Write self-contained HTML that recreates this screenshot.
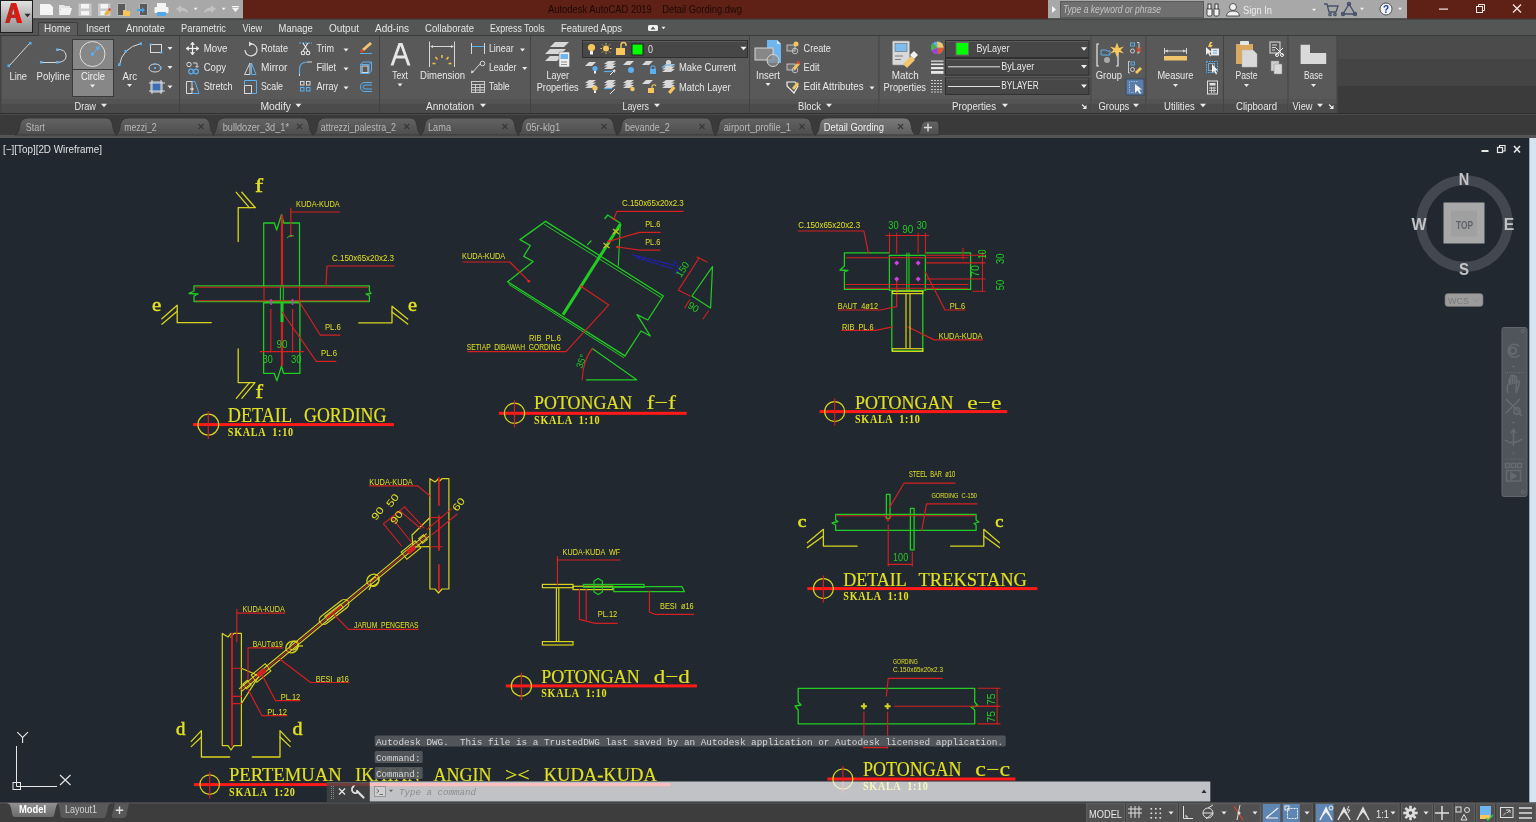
<!DOCTYPE html><html><head><meta charset="utf-8"><style>
*{margin:0;padding:0}html,body{width:1536px;height:822px;overflow:hidden;background:#212830;font-family:"Liberation Sans",sans-serif}
svg{position:absolute;left:0;top:0}
text{white-space:pre}.S{font-family:"Liberation Sans",sans-serif}.R{font-family:"Liberation Serif",serif}.M{font-family:"Liberation Mono",monospace}
</style></head><body>
<svg width="1536" height="822" viewBox="0 0 1536 822">
<rect x="193" y="423.1" width="201" height="3" fill="#ff1a1a"/>
<circle cx="208.3" cy="424.6" r="10.4" fill="none" stroke="#d8d41e" stroke-width="1.2"/>
<line x1="208.3" y1="411.20000000000005" x2="208.3" y2="439.0" stroke="#d42020" stroke-width="1.2"/>
<text class="R" x="227.8" y="421.8" font-size="21.1" fill="#e2e022" stroke="#e2e022" stroke-width="0.15" textLength="64.2" lengthAdjust="spacingAndGlyphs">DETAIL</text>
<text class="R" x="304" y="421.8" font-size="21.1" fill="#e2e022" stroke="#e2e022" stroke-width="0.15" textLength="82.4" lengthAdjust="spacingAndGlyphs">GORDING</text>
<text class="R" x="0" y="0" font-size="12.7" font-weight="bold" fill="#e2e022" textLength="81.5" lengthAdjust="spacing" transform="translate(227.8,436.3) scale(0.8,1)">SKALA  1:10</text>
<g fill="none" stroke="#d8d41e" stroke-width="1.3" stroke-linejoin="round" stroke-linecap="round">
<path d="M238.2,241.5 L238.2,207.7 L255.4,207.7 L241.8,192.3" stroke="#d8d41e" stroke-width="1.3" fill="none"/>
<line x1="249.3" y1="207.7" x2="236.3" y2="192.3" stroke="#d8d41e" stroke-width="1.3"/>
<path d="M238.2,349 L238.2,382.6 L255,382.6 L241.8,398.3" stroke="#d8d41e" stroke-width="1.3" fill="none"/>
<line x1="249.5" y1="382.6" x2="236.3" y2="398.3" stroke="#d8d41e" stroke-width="1.3"/>
<path d="M211.2,322.7 L177.2,322.7 L177.2,305.2 L161.9,318.7" stroke="#d8d41e" stroke-width="1.3" fill="none"/>
<line x1="177.2" y1="311.2" x2="161.9" y2="324.2" stroke="#d8d41e" stroke-width="1.3"/>
<path d="M358.7,322.8 L392,322.8 L392,306.2 L407.7,319" stroke="#d8d41e" stroke-width="1.3" fill="none"/>
<line x1="392" y1="312" x2="407.7" y2="324" stroke="#d8d41e" stroke-width="1.3"/>
</g>
<text class="R" x="255" y="192" font-size="19" fill="#e2e022" textLength="8.0" lengthAdjust="spacingAndGlyphs" stroke="#e2e022" stroke-width="0.5">f</text>
<text class="R" x="255.4" y="398.4" font-size="19" fill="#e2e022" textLength="7.5" lengthAdjust="spacingAndGlyphs" stroke="#e2e022" stroke-width="0.5">f</text>
<text class="R" x="152" y="311" font-size="19" fill="#e2e022" textLength="9.2" lengthAdjust="spacingAndGlyphs" stroke="#e2e022" stroke-width="0.5">e</text>
<text class="R" x="408" y="311" font-size="19" fill="#e2e022" textLength="9.0" lengthAdjust="spacingAndGlyphs" stroke="#e2e022" stroke-width="0.5">e</text>
<g fill="none" stroke="#22cc22" stroke-width="1.3" stroke-linejoin="round" stroke-linecap="round">
<path d="M263.7,285.9 L263.7,223 L274.4,223 L276.7,230 L281.5,214.7 L283.7,223 L299.5,223 L299.5,285.9" stroke="#22cc22" stroke-width="1.3" fill="none"/>
<path d="M263.6,302 L263.6,373.3 L274.2,373.3 L276.9,380.8 L281.5,366.3 L283.5,373.3 L299.9,373.3 L299.9,302" stroke="#22cc22" stroke-width="1.3" fill="none"/>
<path d="M299.5,285.9 L369.4,285.9 L369.4,291 L371,293.5 L366,294 L369.4,296 L369.4,301.5 L299.5,301.5" stroke="#22cc22" stroke-width="1.3" fill="none"/>
<path d="M263.7,285.9 L194,285.9 L194,291 L189,293.5 L198,294 L194,296 L194,301.5 L263.7,301.5" stroke="#22cc22" stroke-width="1.3" fill="none"/>
<line x1="280.4" y1="286" x2="280.4" y2="301" stroke="#22cc22" stroke-width="1.1"/>
<line x1="283.3" y1="286" x2="283.3" y2="301" stroke="#22cc22" stroke-width="1.1"/>
<line x1="263.7" y1="285.9" x2="299.5" y2="285.9" stroke="#22cc22" stroke-width="1.3"/>
</g>
<line x1="264" y1="302" x2="300" y2="302" stroke="#22cc22" stroke-width="3"/>
<line x1="282" y1="302" x2="282" y2="322" stroke="#22cc22" stroke-width="3"/>
<line x1="282" y1="215" x2="282" y2="285" stroke="#d42020" stroke-width="2.2"/>
<line x1="282" y1="322" x2="282" y2="366" stroke="#d42020" stroke-width="2.2"/>
<g fill="none" stroke="#d42020" stroke-width="1.1" stroke-linejoin="round" stroke-linecap="round">
<line x1="196" y1="287.2" x2="368" y2="287.2" stroke="#d42020" stroke-width="1"/>
<line x1="196" y1="300.8" x2="368" y2="300.8" stroke="#d42020" stroke-width="1"/>
<line x1="264" y1="287" x2="264" y2="301" stroke="#d42020" stroke-width="1.1"/>
<line x1="299.5" y1="287" x2="299.5" y2="301" stroke="#d42020" stroke-width="1.1"/>
<line x1="270.8" y1="309.4" x2="270.8" y2="352" stroke="#d42020" stroke-width="1.2"/>
<line x1="292.6" y1="309.4" x2="292.6" y2="352" stroke="#d42020" stroke-width="1.2"/>
<line x1="260" y1="351.6" x2="303.6" y2="351.6" stroke="#d42020" stroke-width="1.2"/>
<path d="M290.8,236 L290.8,208 L290.8,212 L339.5,212" stroke="#d42020" stroke-width="1.2" fill="none"/>
<path d="M326,285.5 L327,266 L394,266" stroke="#d42020" stroke-width="1.2" fill="none"/>
<path d="M299.5,302 L320.4,335.2 L340,335.2" stroke="#d42020" stroke-width="1.2" fill="none"/>
<path d="M282.2,312 L316.3,361.4 L335.8,361.4" stroke="#d42020" stroke-width="1.2" fill="none"/>
</g>
<circle cx="290.8" cy="236" r="1.3" fill="#ff2020"/>
<path d="M287,238 Q290,234 294,236" stroke="#22cc22" fill="none"/>
<path d="M271,299 V305 M292.5,299 V305" stroke="#c040c0" stroke-width="1.5"/>
<text class="S" x="296" y="207" font-size="9.7" fill="#e2e022" textLength="43.7" lengthAdjust="spacingAndGlyphs">KUDA-KUDA</text>
<text class="S" x="332" y="261" font-size="9.7" fill="#e2e022" textLength="62.0" lengthAdjust="spacingAndGlyphs">C.150x65x20x2.3</text>
<text class="S" x="325" y="329.9" font-size="9.3" fill="#e2e022" textLength="15.8" lengthAdjust="spacingAndGlyphs">PL.6</text>
<text class="S" x="321" y="356" font-size="9.3" fill="#e2e022" textLength="16.0" lengthAdjust="spacingAndGlyphs">PL.6</text>
<text class="S" x="282" y="347.8" font-size="10.5" fill="#22cc22" textLength="11.0" lengthAdjust="spacingAndGlyphs" text-anchor="middle">90</text>
<text class="S" x="262.8" y="363" font-size="10.5" fill="#22cc22" textLength="10.0" lengthAdjust="spacingAndGlyphs">30</text>
<text class="S" x="291" y="363" font-size="10.5" fill="#22cc22" textLength="10.6" lengthAdjust="spacingAndGlyphs">30</text>
<rect x="498.9" y="411.8" width="187.80000000000007" height="3" fill="#ff1a1a"/>
<circle cx="514.5" cy="413.3" r="10.1" fill="none" stroke="#d8d41e" stroke-width="1.2"/>
<line x1="514.5" y1="400.2" x2="514.5" y2="427.40000000000003" stroke="#d42020" stroke-width="1.2"/>
<text class="R" x="534" y="409.4" font-size="19.8" fill="#e2e022" stroke="#e2e022" stroke-width="0.15" textLength="98.2" lengthAdjust="spacingAndGlyphs">POTONGAN</text>
<text class="R" x="646.5" y="409.4" font-size="19.8" fill="#e2e022" stroke="#e2e022" stroke-width="0.15" textLength="29.5" lengthAdjust="spacingAndGlyphs">f−f</text>
<text class="R" x="0" y="0" font-size="12.7" font-weight="bold" fill="#e2e022" textLength="82.1" lengthAdjust="spacing" transform="translate(534,424) scale(0.8,1)">SKALA  1:10</text>
<g fill="none" stroke="#22cc22" stroke-width="1.3" stroke-linejoin="round" stroke-linecap="round">
<path d="M545.6,221.4 L520,239.6 L530.3,245.5 L523.7,256.4 L533.2,261.5 L507.7,281.7" stroke="#22cc22" stroke-width="1.3" fill="none"/>
<line x1="545.6" y1="221.4" x2="663" y2="295.7" stroke="#22cc22" stroke-width="1.3"/>
<line x1="544.5" y1="224.5" x2="661" y2="297.5" stroke="#22cc22" stroke-width="1.0"/>
<line x1="507.7" y1="281.7" x2="625" y2="355.9" stroke="#22cc22" stroke-width="1.3"/>
<line x1="509" y1="284.5" x2="623.5" y2="357.5" stroke="#22cc22" stroke-width="1.0"/>
<path d="M625,355.9 L641,331 L650.3,336 L637,314.6 L647.8,320 L663.3,296" stroke="#22cc22" stroke-width="1.3" fill="none"/>
<line x1="620.4" y1="224" x2="618.3" y2="265.6" stroke="#22cc22" stroke-width="1.1"/>
<path d="M604.9,218.5 L607.7,215 L620.4,223.2" stroke="#22cc22" stroke-width="1.3" fill="none"/>
<line x1="587.5" y1="244.6" x2="591" y2="241" stroke="#22cc22" stroke-width="1.2"/>
<path d="M592.3,348.5 L636.7,379.8 L586.5,379.8" stroke="#22cc22" stroke-width="1.2" fill="none"/>
<path d="M712.5,266.7 L691.9,296 L710.6,307.9 L712.5,266.7" stroke="#22cc22" stroke-width="1.2" fill="none"/>
</g>
<line x1="620.4" y1="224" x2="563" y2="314.6" stroke="#22cc22" stroke-width="3"/>
<g fill="none" stroke="#d42020" stroke-width="1.2" stroke-linejoin="round" stroke-linecap="round">
<path d="M463,262 L509.9,262 L528.8,281.2" stroke="#d42020" stroke-width="1.2" fill="none"/>
<path d="M581.6,286.8 L608.8,304.9 L566,351.6 L467.8,351.6" stroke="#d42020" stroke-width="1.2" fill="none"/>
<path d="M614,219 L616.7,211.4 L683.2,211.4" stroke="#d42020" stroke-width="1.2" fill="none"/>
<path d="M608.8,241.4 L639.4,232.4 L660.3,232.4" stroke="#d42020" stroke-width="1.2" fill="none"/>
<path d="M617.5,247 L640,250.1 L660,250.1" stroke="#d42020" stroke-width="1.2" fill="none"/>
<line x1="699" y1="258" x2="679.2" y2="288.9" stroke="#d42020" stroke-width="1.2"/>
<line x1="697" y1="257" x2="707" y2="262" stroke="#d42020" stroke-width="1.1"/>
<line x1="678" y1="290" x2="690" y2="296" stroke="#d42020" stroke-width="1.1"/>
<line x1="684.8" y1="307.9" x2="689.5" y2="300" stroke="#d42020" stroke-width="1.1"/>
<line x1="703" y1="319" x2="708.5" y2="311" stroke="#d42020" stroke-width="1.1"/>
<path d="M582.2,379.8 Q583,360 592.3,348.5" stroke="#d42020" stroke-width="1.2" fill="none"/>
</g>
<path d="M632.6,254.9 L675,265.5 M636,257.5 L674,269 M673.5,261 Q679,265 678,268.5 Q677,271 673.5,274" stroke="#2020c8" stroke-width="1.2" fill="none" stroke-dasharray="4,1"/>
<g stroke="#c8c020" stroke-width="1.3"><path d="M613,229 L619,234 M619,229 L613,234 M603.5,243 L609.5,248 M609.5,243 L603.5,248"/></g>
<circle cx="528.8" cy="281.2" r="1.3" fill="#ff2020"/>
<circle cx="581.6" cy="286.8" r="1.3" fill="#ff2020"/>
<circle cx="614" cy="219" r="1.3" fill="#ff2020"/>
<circle cx="608.8" cy="241.4" r="1.3" fill="#ff2020"/>
<circle cx="617.5" cy="247" r="1.3" fill="#ff2020"/>
<text class="S" x="462" y="258.6" font-size="9.4" fill="#e2e022" textLength="43.2" lengthAdjust="spacingAndGlyphs">KUDA-KUDA</text>
<text class="S" x="622" y="206.3" font-size="9.7" fill="#e2e022" textLength="61.7" lengthAdjust="spacingAndGlyphs">C.150x65x20x2.3</text>
<text class="S" x="645.2" y="226.7" font-size="9.0" fill="#e2e022" textLength="15.1" lengthAdjust="spacingAndGlyphs">PL.6</text>
<text class="S" x="645.2" y="244.6" font-size="9.0" fill="#e2e022" textLength="15.1" lengthAdjust="spacingAndGlyphs">PL.6</text>
<text class="S" x="529" y="340.7" font-size="9.7" fill="#e2e022" textLength="31.8" lengthAdjust="spacingAndGlyphs">RIB  PL.6</text>
<text class="S" x="466.8" y="350.4" font-size="9.4" fill="#e2e022" textLength="94.0" lengthAdjust="spacingAndGlyphs">SETIAP  DIBAWAH  GORDING</text>
<text class="S" x="0" y="0" font-size="10" fill="#22cc22" textLength="16" lengthAdjust="spacingAndGlyphs" transform="translate(681,278) rotate(-57)">150</text>
<text class="S" x="0" y="0" font-size="10" fill="#22cc22" textLength="11" lengthAdjust="spacingAndGlyphs" transform="translate(687,307) rotate(33)">90</text>
<text class="S" x="0" y="0" font-size="9.5" fill="#22cc22" textLength="14" lengthAdjust="spacingAndGlyphs" transform="translate(582,369) rotate(-70)">35°</text>
<rect x="819.6" y="410.1" width="187.60000000000002" height="3" fill="#ff1a1a"/>
<circle cx="834.7" cy="411.6" r="10" fill="none" stroke="#d8d41e" stroke-width="1.2"/>
<line x1="834.7" y1="398.6" x2="834.7" y2="425.6" stroke="#d42020" stroke-width="1.2"/>
<text class="R" x="855" y="408.5" font-size="19.1" fill="#e2e022" stroke="#e2e022" stroke-width="0.15" textLength="98.4" lengthAdjust="spacingAndGlyphs">POTONGAN</text>
<text class="R" x="967.3" y="408.5" font-size="19.1" fill="#e2e022" stroke="#e2e022" stroke-width="0.15" textLength="34.2" lengthAdjust="spacingAndGlyphs">e−e</text>
<text class="R" x="0" y="0" font-size="12.7" font-weight="bold" fill="#e2e022" textLength="81.1" lengthAdjust="spacing" transform="translate(855,423) scale(0.8,1)">SKALA  1:10</text>
<g fill="none" stroke="#22cc22" stroke-width="1.3" stroke-linejoin="round" stroke-linecap="round">
<path d="M889.4,252.9 L844.4,252.9 L844.4,266 L840,270 L848,270.5 L844.4,272 L844.4,289.4 L889.4,289.4" stroke="#22cc22" stroke-width="1.3" fill="none"/>
<path d="M925.4,252.9 L970.6,252.9 L970.6,289.4 L925.4,289.4" stroke="#22cc22" stroke-width="1.3" fill="none"/>
<rect x="889.4" y="255.3" width="36" height="35" />
<line x1="906.8" y1="253" x2="906.8" y2="290" stroke="#22cc22" stroke-width="1.1"/>
<line x1="909" y1="253" x2="909" y2="290" stroke="#22cc22" stroke-width="1.1"/>
<rect x="891.8" y="291" width="31" height="60" />
</g>
<g fill="none" stroke="#d42020" stroke-width="1.1" stroke-linejoin="round" stroke-linecap="round">
<line x1="846" y1="257.8" x2="968" y2="257.8" stroke="#d42020" stroke-width="1.1"/>
<line x1="846" y1="284.5" x2="968" y2="284.5" stroke="#d42020" stroke-width="1.1"/>
<line x1="885.8" y1="235.5" x2="928.7" y2="235.5" stroke="#d42020" stroke-width="1.1"/>
<line x1="889.5" y1="233" x2="889.5" y2="253" stroke="#d42020" stroke-width="1.1"/>
<line x1="896.7" y1="233" x2="896.7" y2="253" stroke="#d42020" stroke-width="1.1"/>
<line x1="918.1" y1="233" x2="918.1" y2="253" stroke="#d42020" stroke-width="1.1"/>
<line x1="925.4" y1="233" x2="925.4" y2="253" stroke="#d42020" stroke-width="1.1"/>
<line x1="982.5" y1="252" x2="982.5" y2="291.2" stroke="#d42020" stroke-width="1.1"/>
<line x1="926" y1="255.3" x2="985" y2="255.3" stroke="#d42020" stroke-width="1.1"/>
<line x1="926" y1="262.9" x2="985" y2="262.9" stroke="#d42020" stroke-width="1.1"/>
<line x1="926" y1="279" x2="985" y2="279" stroke="#d42020" stroke-width="1.1"/>
<line x1="973" y1="291.2" x2="985" y2="291.2" stroke="#d42020" stroke-width="1.1"/>
<line x1="846" y1="288.2" x2="968" y2="288.2" stroke="#d42020" stroke-width="1.1"/>
<line x1="963" y1="248" x2="963" y2="259" stroke="#d42020" stroke-width="1.1"/>
<path d="M798,231 L863.9,231 L868.5,253.4" stroke="#d42020" stroke-width="1.2" fill="none"/>
<path d="M838,310 L880.3,310 L896.7,306.7 L896.7,279" stroke="#d42020" stroke-width="1.2" fill="none"/>
<path d="M965,310 L945,310 L925.4,272" stroke="#d42020" stroke-width="1.2" fill="none"/>
<path d="M842,330.4 L875.8,330.4 L892.5,326.8" stroke="#d42020" stroke-width="1.2" fill="none"/>
<path d="M982.5,339.9 L934.2,339.9 L907.7,326.8" stroke="#d42020" stroke-width="1.2" fill="none"/>
</g>
<g fill="none" stroke="#d8d41e" stroke-width="1.2"><rect x="892.5" y="291.2" width="30.3" height="2.4"/><rect x="892.5" y="348.7" width="30.3" height="2.7"/><path d="M906,293.6 V348.7 M910,293.6 V348.7"/></g>
<path d="M894.2,262.9 L896.7,260.4 L899.2,262.9 L896.7,265.4 Z" fill="#d040e0"/>
<path d="M894.2,279 L896.7,276.5 L899.2,279 L896.7,281.5 Z" fill="#d040e0"/>
<path d="M915.6,262.9 L918.1,260.4 L920.6,262.9 L918.1,265.4 Z" fill="#d040e0"/>
<path d="M915.6,279 L918.1,276.5 L920.6,279 L918.1,281.5 Z" fill="#d040e0"/>
<text class="S" x="798.2" y="228.2" font-size="9.7" fill="#e2e022" textLength="62.0" lengthAdjust="spacingAndGlyphs">C.150x65x20x2.3</text>
<text class="S" x="837.8" y="309" font-size="9.0" fill="#e2e022" textLength="40.2" lengthAdjust="spacingAndGlyphs">BAUT  4ø12</text>
<text class="S" x="949.7" y="309" font-size="9.0" fill="#e2e022" textLength="15.5" lengthAdjust="spacingAndGlyphs">PL.6</text>
<text class="S" x="842" y="330" font-size="9.7" fill="#e2e022" textLength="31.6" lengthAdjust="spacingAndGlyphs">RIB  PL.6</text>
<text class="S" x="938.7" y="338.6" font-size="9.0" fill="#e2e022" textLength="43.8" lengthAdjust="spacingAndGlyphs">KUDA-KUDA</text>
<text class="S" x="888.2" y="228.6" font-size="10" fill="#22cc22" textLength="10.4" lengthAdjust="spacingAndGlyphs">30</text>
<text class="S" x="902.2" y="232.8" font-size="10" fill="#22cc22" textLength="11.0" lengthAdjust="spacingAndGlyphs">90</text>
<text class="S" x="916.8" y="228.6" font-size="10" fill="#22cc22" textLength="10.1" lengthAdjust="spacingAndGlyphs">30</text>
<text class="S" x="0" y="0" font-size="10" fill="#22cc22" textLength="9.5" lengthAdjust="spacingAndGlyphs" transform="translate(985.5,259) rotate(-90)">10</text>
<text class="S" x="0" y="0" font-size="10" fill="#22cc22" textLength="12" lengthAdjust="spacingAndGlyphs" transform="translate(978.5,277) rotate(-90)">70</text>
<text class="S" x="0" y="0" font-size="10" fill="#22cc22" textLength="10.5" lengthAdjust="spacingAndGlyphs" transform="translate(1004,264) rotate(-90)">30</text>
<text class="S" x="0" y="0" font-size="10" fill="#22cc22" textLength="10.5" lengthAdjust="spacingAndGlyphs" transform="translate(1004,290.3) rotate(-90)">50</text>
<rect x="193.9" y="783.1" width="476.5" height="3" fill="#ff1a1a"/>
<circle cx="209.7" cy="784.6" r="9.8" fill="none" stroke="#d8d41e" stroke-width="1.2"/>
<line x1="209.7" y1="771.8000000000001" x2="209.7" y2="798.4" stroke="#d42020" stroke-width="1.2"/>
<text class="R" x="229" y="780.5" font-size="19.1" fill="#e2e022" stroke="#e2e022" stroke-width="0.15" textLength="112.6" lengthAdjust="spacingAndGlyphs">PERTEMUAN</text>
<text class="R" x="355.3" y="780.5" font-size="19.1" fill="#e2e022" stroke="#e2e022" stroke-width="0.15" textLength="64.7" lengthAdjust="spacingAndGlyphs">IKATAN</text>
<text class="R" x="433.5" y="780.5" font-size="19.1" fill="#e2e022" stroke="#e2e022" stroke-width="0.15" textLength="58.0" lengthAdjust="spacingAndGlyphs">ANGIN</text>
<text class="R" x="505" y="780.5" font-size="19.1" fill="#e2e022" stroke="#e2e022" stroke-width="0.15" textLength="24.7" lengthAdjust="spacingAndGlyphs">&gt;&lt;</text>
<text class="R" x="543.7" y="780.5" font-size="19.1" fill="#e2e022" stroke="#e2e022" stroke-width="0.15" textLength="113.1" lengthAdjust="spacingAndGlyphs">KUDA-KUDA</text>
<text class="R" x="0" y="0" font-size="12.7" font-weight="bold" fill="#e2e022" textLength="82.3" lengthAdjust="spacing" transform="translate(229,795.7) scale(0.8,1)">SKALA  1:20</text>
<g fill="none" stroke="#d8d41e" stroke-width="1.3" stroke-linejoin="round" stroke-linecap="round">
<path d="M229.7,757 L201.4,757 L201.4,730.6 L191.25,741.4" stroke="#d8d41e" stroke-width="1.3" fill="none"/>
<line x1="201.4" y1="737" x2="191.25" y2="746.6" stroke="#d8d41e" stroke-width="1.3"/>
<path d="M252.2,757 L280,757 L280,730.6 L290.2,741.4" stroke="#d8d41e" stroke-width="1.3" fill="none"/>
<line x1="280" y1="737" x2="290.2" y2="746.6" stroke="#d8d41e" stroke-width="1.3"/>
<path d="M231,633.4 L228,637 L222.3,633.4 L222.3,745.6 L228,745.6 L231,750 L234,745.6 L241.4,745.6 L241.4,633.4 L234,633.4 L231,637" stroke="#d8d41e" stroke-width="1.2" fill="none"/>
<path d="M438.5,478.7 L435,482 L429.9,478.7 L429.9,589 L435,589 L438.5,593 L442,589 L448.9,589 L448.9,478.7 L442,478.7 L438.5,482" stroke="#d8d41e" stroke-width="1.2" fill="none"/>
<line x1="241.65" y1="691.39" x2="428.65" y2="536.69" stroke="#d8d41e" stroke-width="1.1"/>
<line x1="239.35" y1="688.61" x2="426.35" y2="533.91" stroke="#d8d41e" stroke-width="1.1"/>
<path d="M241.4,668.2 L259,676 L241.4,703.6" stroke="#d8d41e" stroke-width="1.2" fill="none"/>
<path d="M430,517.5 L412,535 L413,547 L430,546.7" stroke="#d8d41e" stroke-width="1.2" fill="none"/>
</g>
<g transform="translate(334,612) rotate(-38)"><rect x="-17.5" y="-4.5" width="35" height="9" rx="4.5" fill="none" stroke="#d8d41e" stroke-width="1.2"/><rect x="-10" y="-2.2" width="20" height="4.4" fill="none" stroke="#d8d41e" stroke-width="1"/><line x1="-9" y1="0" x2="9" y2="0" stroke="#d42020" stroke-width="1.6"/></g>
<g fill="none" stroke="#d8d41e" stroke-width="1.3"><ellipse cx="292" cy="647" rx="6.5" ry="5.5" transform="rotate(-37 292 647)"/><ellipse cx="294" cy="645.5" rx="3.5" ry="5" transform="rotate(40 294 645.5)"/><path d="M298,646 H303"/><ellipse cx="373" cy="580" rx="6.5" ry="5.5" transform="rotate(-37 373 580)"/><ellipse cx="374.5" cy="582" rx="3.5" ry="5" transform="rotate(40 374.5 582)"/><path d="M371,586 L369,590"/></g>
<g transform="translate(261,673) rotate(-39)"><rect x="-9" y="-4.5" width="18" height="9" fill="none" stroke="#d8d41e" stroke-width="1.1"/><rect x="-4" y="-2.5" width="9" height="5" fill="#d42020"/></g>
<g transform="translate(411,550) rotate(-39)"><rect x="-9" y="-4.5" width="18" height="9" fill="none" stroke="#d8d41e" stroke-width="1.1"/><rect x="-4" y="-2.5" width="9" height="5" fill="#d42020"/></g>
<g transform="translate(247,684.6) rotate(-39)"><rect x="-3" y="-3" width="6" height="6" fill="none" stroke="#d8d41e" stroke-width="1.1"/></g>
<g transform="translate(423,539) rotate(-39)"><rect x="-3" y="-3" width="6" height="6" fill="none" stroke="#d8d41e" stroke-width="1.1"/></g>
<g fill="none" stroke="#d42020" stroke-width="1.1" stroke-linejoin="round" stroke-linecap="round">
<line x1="232" y1="633.4" x2="232" y2="745.6" stroke="#d42020" stroke-width="1.8"/>
<line x1="438.9" y1="478" x2="438.9" y2="505" stroke="#d42020" stroke-width="1.8"/>
<line x1="438.9" y1="517" x2="438.9" y2="550" stroke="#d42020" stroke-width="1.8"/>
<line x1="438.9" y1="565" x2="438.9" y2="590" stroke="#d42020" stroke-width="1.8"/>
<line x1="240.5" y1="690" x2="427.5" y2="535.3" stroke="#d42020" stroke-width="1.0"/>
<line x1="232" y1="668.2" x2="241.4" y2="668.2" stroke="#d42020" stroke-width="1.1"/>
<line x1="232" y1="696.4" x2="241.4" y2="696.4" stroke="#d42020" stroke-width="1.1"/>
<line x1="232" y1="703.6" x2="241.4" y2="703.6" stroke="#d42020" stroke-width="1.1"/>
<line x1="430" y1="517.5" x2="442" y2="517.5" stroke="#d42020" stroke-width="1.1"/>
<line x1="430" y1="546.7" x2="442" y2="546.7" stroke="#d42020" stroke-width="1.1"/>
<path d="M236.8,609.6 L236.8,641.7" stroke="#d42020" stroke-width="1.2" fill="none"/>
<line x1="236.8" y1="613.2" x2="284.8" y2="613.2" stroke="#d42020" stroke-width="1.2"/>
<path d="M248,679 L248,647.9 L282.7,647.9" stroke="#d42020" stroke-width="1.2" fill="none"/>
<path d="M262,674.8 L275.5,700.7 L300,700.7" stroke="#d42020" stroke-width="1.2" fill="none"/>
<path d="M248,689.3 L262,715.7 L287,715.7" stroke="#d42020" stroke-width="1.2" fill="none"/>
<path d="M278.6,658.3 L310.6,682.5 L349,682.5" stroke="#d42020" stroke-width="1.2" fill="none"/>
<path d="M334.4,614.8 L348.5,629.3 L418,629.3" stroke="#d42020" stroke-width="1.2" fill="none"/>
<path d="M369.3,485.8 L417.5,485.8 L430.2,496.1" stroke="#d42020" stroke-width="1.2" fill="none"/>
<line x1="383.5" y1="523.8" x2="401.7" y2="546" stroke="#d42020" stroke-width="1.1"/>
<line x1="391.4" y1="517.2" x2="411.2" y2="542" stroke="#d42020" stroke-width="1.1"/>
<line x1="399.3" y1="510.3" x2="420.7" y2="528.5" stroke="#d42020" stroke-width="1.1"/>
<line x1="404.9" y1="507.2" x2="423.9" y2="527.8" stroke="#d42020" stroke-width="1.1"/>
<line x1="383.5" y1="523.8" x2="404.9" y2="506.7" stroke="#d42020" stroke-width="1.1"/>
<line x1="427" y1="529.3" x2="451.5" y2="508.8" stroke="#d42020" stroke-width="1.1"/>
<line x1="431.8" y1="534.9" x2="457" y2="514.3" stroke="#d42020" stroke-width="1.1"/>
<line x1="439" y1="515" x2="439" y2="550" stroke="#d42020" stroke-width="1.1"/>
</g>
<text class="S" x="242.4" y="611.7" font-size="9.4" fill="#e2e022" textLength="42.4" lengthAdjust="spacingAndGlyphs">KUDA-KUDA</text>
<text class="S" x="252.7" y="646.9" font-size="9.6" fill="#e2e022" textLength="30.0" lengthAdjust="spacingAndGlyphs">BAUTø19</text>
<text class="S" x="280.7" y="699.6" font-size="8.6" fill="#e2e022" textLength="19.6" lengthAdjust="spacingAndGlyphs">PL.12</text>
<text class="S" x="267.2" y="715.1" font-size="8.6" fill="#e2e022" textLength="19.7" lengthAdjust="spacingAndGlyphs">PL.12</text>
<text class="S" x="315.8" y="682" font-size="8.6" fill="#e2e022" textLength="33.1" lengthAdjust="spacingAndGlyphs">BESI  ø16</text>
<text class="S" x="354" y="628.3" font-size="8.8" fill="#e2e022" textLength="64.6" lengthAdjust="spacingAndGlyphs">JARUM  PENGERAS</text>
<text class="S" x="369.3" y="485" font-size="8.8" fill="#e2e022" textLength="43.5" lengthAdjust="spacingAndGlyphs">KUDA-KUDA</text>
<text class="R" x="176" y="735.4" font-size="19" fill="#e2e022" textLength="9.4" lengthAdjust="spacingAndGlyphs" stroke="#e2e022" stroke-width="0.5">d</text>
<text class="R" x="292.6" y="735.4" font-size="19" fill="#e2e022" textLength="10.0" lengthAdjust="spacingAndGlyphs" stroke="#e2e022" stroke-width="0.5">d</text>
<text class="S" x="0" y="0" font-size="10" fill="#e2e022" textLength="14" lengthAdjust="spacingAndGlyphs" transform="translate(376,521) rotate(-52)">90</text>
<text class="S" x="0" y="0" font-size="10" fill="#e2e022" textLength="14" lengthAdjust="spacingAndGlyphs" transform="translate(391,508) rotate(-52)">50</text>
<text class="S" x="0" y="0" font-size="10" fill="#e2e022" textLength="14" lengthAdjust="spacingAndGlyphs" transform="translate(395,525) rotate(-52)">90</text>
<text class="S" x="0" y="0" font-size="10" fill="#e2e022" textLength="14" lengthAdjust="spacingAndGlyphs" transform="translate(457,512) rotate(-52)">60</text>
<rect x="505.8" y="684.4" width="191.09999999999997" height="3" fill="#ff1a1a"/>
<circle cx="521.4" cy="685.9" r="10.1" fill="none" stroke="#d8d41e" stroke-width="1.2"/>
<line x1="521.4" y1="672.8" x2="521.4" y2="700.0" stroke="#d42020" stroke-width="1.2"/>
<text class="R" x="541.2" y="683" font-size="19.8" fill="#e2e022" stroke="#e2e022" stroke-width="0.15" textLength="98.5" lengthAdjust="spacingAndGlyphs">POTONGAN</text>
<text class="R" x="653.7" y="683" font-size="19.8" fill="#e2e022" stroke="#e2e022" stroke-width="0.15" textLength="36.0" lengthAdjust="spacingAndGlyphs">d−d</text>
<text class="R" x="0" y="0" font-size="12.7" font-weight="bold" fill="#e2e022" textLength="81.7" lengthAdjust="spacing" transform="translate(541.2,697.2) scale(0.8,1)">SKALA  1:10</text>
<g fill="none" stroke="#d8d41e" stroke-width="1.2"><rect x="542.4" y="584.4" width="30.6" height="3.3"/><rect x="542.4" y="641.6" width="30.6" height="3.4"/><path d="M556.4,587.7 V641.6 M558.8,587.7 V641.6"/><rect x="573" y="586.3" width="39.8" height="3.3"/></g>
<g fill="none" stroke="#22cc22" stroke-width="1.2"><rect x="583.3" y="584.4" width="60.7" height="2.9"/><path d="M613.8,586.7 H682 L684.4,591.6 H613.8 Z"/><path d="M594,581 L598.2,578.5 L602.4,581 V592 L598.2,594.5 L594,592 Z"/></g>
<g fill="none" stroke="#d42020" stroke-width="1.2" stroke-linejoin="round" stroke-linecap="round">
<path d="M557.4,585.1 L557.4,556.5" stroke="#d42020" stroke-width="1.2" fill="none"/>
<line x1="557.4" y1="560" x2="620.2" y2="560" stroke="#d42020" stroke-width="1.2"/>
<path d="M579.4,589 L579.4,619.4 L595.3,623.3 L617.3,623.3" stroke="#d42020" stroke-width="1.2" fill="none"/>
<line x1="586.2" y1="589" x2="586.2" y2="619.4" stroke="#d42020" stroke-width="1.2"/>
<path d="M649.4,591 L649.4,612 L654.7,614.3 L693.6,614.3" stroke="#d42020" stroke-width="1.2" fill="none"/>
</g>
<text class="S" x="562.6" y="555.2" font-size="9.7" fill="#e2e022" textLength="57.6" lengthAdjust="spacingAndGlyphs">KUDA-KUDA  WF</text>
<text class="S" x="597.7" y="617.4" font-size="9.7" fill="#e2e022" textLength="19.6" lengthAdjust="spacingAndGlyphs">PL.12</text>
<text class="S" x="660" y="609.1" font-size="9.4" fill="#e2e022" textLength="33.6" lengthAdjust="spacingAndGlyphs">BESI  ø16</text>
<rect x="807.3" y="587.1" width="230.0" height="3" fill="#ff1a1a"/>
<circle cx="823.4" cy="588.6" r="10" fill="none" stroke="#d8d41e" stroke-width="1.2"/>
<line x1="823.4" y1="575.6" x2="823.4" y2="602.6" stroke="#d42020" stroke-width="1.2"/>
<text class="R" x="843.3" y="585.5" font-size="19.4" fill="#e2e022" stroke="#e2e022" stroke-width="0.15" textLength="63.5" lengthAdjust="spacingAndGlyphs">DETAIL</text>
<text class="R" x="918.6" y="585.5" font-size="19.4" fill="#e2e022" stroke="#e2e022" stroke-width="0.15" textLength="108.3" lengthAdjust="spacingAndGlyphs">TREKSTANG</text>
<text class="R" x="0" y="0" font-size="12.7" font-weight="bold" fill="#e2e022" textLength="81.6" lengthAdjust="spacing" transform="translate(843.3,600.1) scale(0.8,1)">SKALA  1:10</text>
<g fill="none" stroke="#d8d41e" stroke-width="1.3" stroke-linejoin="round" stroke-linecap="round">
<path d="M857.2,546.1 L823.4,546.1 L823.4,529.3 L807.3,542.7" stroke="#d8d41e" stroke-width="1.3" fill="none"/>
<line x1="823.4" y1="536" x2="807.3" y2="547.6" stroke="#d8d41e" stroke-width="1.3"/>
<path d="M950.6,546.1 L983.8,546.1 L983.8,529.3 L999.5,542.7" stroke="#d8d41e" stroke-width="1.3" fill="none"/>
<line x1="983.8" y1="536" x2="999.5" y2="547.6" stroke="#d8d41e" stroke-width="1.3"/>
</g>
<text class="R" x="797.7" y="527.2" font-size="17" fill="#e2e022" textLength="8.7" lengthAdjust="spacingAndGlyphs" stroke="#e2e022" stroke-width="0.5">c</text>
<text class="R" x="995.3" y="527.2" font-size="17" fill="#e2e022" textLength="8.2" lengthAdjust="spacingAndGlyphs" stroke="#e2e022" stroke-width="0.5">c</text>
<g fill="none" stroke="#22cc22" stroke-width="1.3" stroke-linejoin="round" stroke-linecap="round">
<path d="M835.6,514.4 L976.1,514.4 L976.1,520 L979,522 L974,523.5 L976.1,525 L976.1,530.3 L835.6,530.3 L835.6,525 L832,523 L838,521.5 L835.6,520 L835.6,514.4" stroke="#22cc22" stroke-width="1.3" fill="none"/>
<rect x="886.4" y="494.3" width="3.6" height="24"/><rect x="910.4" y="508.4" width="3.7" height="41.4"/>
<path d="M908,513 Q909,507 912.5,507 Q916,507 916,513" stroke="none" stroke-width="1" fill="none"/>
</g>
<g fill="none" stroke="#d42020" stroke-width="1.2" stroke-linejoin="round" stroke-linecap="round">
<line x1="837" y1="515.8" x2="975" y2="515.8" stroke="#d42020" stroke-width="1.1"/>
<path d="M889.5,507.4 L904,483.2 L955,483.2" stroke="#d42020" stroke-width="1.2" fill="none"/>
<path d="M921.8,530.3 L926.5,503.8 L977,503.8" stroke="#d42020" stroke-width="1.2" fill="none"/>
<line x1="888.2" y1="525" x2="888.2" y2="566" stroke="#d42020" stroke-width="1.1"/>
<line x1="912.3" y1="552" x2="912.3" y2="566" stroke="#d42020" stroke-width="1.1"/>
<line x1="888.2" y1="564.4" x2="912.3" y2="564.4" stroke="#d42020" stroke-width="1.1"/>
<path d="M884.5,516 L888,521 L891.5,516" stroke="#d42020" stroke-width="1.2" fill="none"/>
</g>
<text class="S" x="909" y="477.3" font-size="8.3" fill="#e2e022" textLength="46.1" lengthAdjust="spacingAndGlyphs">STEEL  BAR  ø10</text>
<text class="S" x="931.4" y="498.3" font-size="8.1" fill="#e2e022" textLength="45.6" lengthAdjust="spacingAndGlyphs">GORDING  C-150</text>
<text class="S" x="893.1" y="561.3" font-size="10.5" fill="#22cc22" textLength="15.1" lengthAdjust="spacingAndGlyphs">100</text>
<rect x="827.4" y="777.5" width="188.0" height="3" fill="#ff1a1a"/>
<circle cx="842.9" cy="779" r="10" fill="none" stroke="#d8d41e" stroke-width="1.2"/>
<line x1="842.9" y1="766" x2="842.9" y2="793" stroke="#d42020" stroke-width="1.2"/>
<text class="R" x="863" y="775.9" font-size="20.0" fill="#e2e022" stroke="#e2e022" stroke-width="0.15" textLength="98.6" lengthAdjust="spacingAndGlyphs">POTONGAN</text>
<text class="R" x="975.3" y="775.9" font-size="20.0" fill="#e2e022" stroke="#e2e022" stroke-width="0.15" textLength="34.7" lengthAdjust="spacingAndGlyphs">c−c</text>
<text class="R" x="0" y="0" font-size="12.7" font-weight="bold" fill="#e2e022" textLength="81.0" lengthAdjust="spacing" transform="translate(863,790.1) scale(0.8,1)">SKALA  1:10</text>
<g fill="none" stroke="#22cc22" stroke-width="1.3" stroke-linejoin="round" stroke-linecap="round">
<path d="M798.2,688.3 L974.7,688.3 L974.7,702 L978,706 L971,707 L974.7,710 L974.7,723.9 L798.2,723.9 L798.2,710 L795,706 L801,705 L798.2,702 L798.2,688.3" stroke="#22cc22" stroke-width="1.3" fill="none"/>
</g>
<g fill="none" stroke="#d42020" stroke-width="1.1" stroke-linejoin="round" stroke-linecap="round">
<line x1="894.4" y1="706.3" x2="999" y2="706.3" stroke="#d42020" stroke-width="1.1"/>
<line x1="997.1" y1="688.3" x2="997.1" y2="723.9" stroke="#d42020" stroke-width="1.1"/>
<line x1="978" y1="688.3" x2="1000" y2="688.3" stroke="#d42020" stroke-width="1.1"/>
<line x1="978" y1="706.3" x2="1000" y2="706.3" stroke="#d42020" stroke-width="1.1"/>
<line x1="978" y1="723.9" x2="1000" y2="723.9" stroke="#d42020" stroke-width="1.1"/>
<line x1="863.9" y1="712" x2="863.9" y2="748" stroke="#d42020" stroke-width="1.1"/>
<line x1="887.6" y1="712" x2="887.6" y2="748" stroke="#d42020" stroke-width="1.1"/>
<line x1="863.9" y1="747.6" x2="887.6" y2="747.6" stroke="#d42020" stroke-width="1.1"/>
<path d="M886.4,696 L888.2,678.3 L942.4,678.3" stroke="#d42020" stroke-width="1.2" fill="none"/>
</g>
<path d="M860.9,706.3 H866.9 M863.9,703.3 V709.3" stroke="#d8d41e" stroke-width="2"/>
<path d="M884.6,706.3 H890.6 M887.6,703.3 V709.3" stroke="#d8d41e" stroke-width="2"/>
<text class="S" x="893.1" y="663.7" font-size="6.9" fill="#e2e022" textLength="24.7" lengthAdjust="spacingAndGlyphs">GORDING</text>
<text class="S" x="893.1" y="671.9" font-size="7.6" fill="#e2e022" textLength="49.9" lengthAdjust="spacingAndGlyphs">C.150x65x20x2.3</text>
<text class="S" x="0" y="0" font-size="10" fill="#22cc22" textLength="11.5" lengthAdjust="spacingAndGlyphs" transform="translate(995,705) rotate(-90)">75</text>
<text class="S" x="0" y="0" font-size="10" fill="#22cc22" textLength="11.5" lengthAdjust="spacingAndGlyphs" transform="translate(995,722.5) rotate(-90)">75</text>
<rect x="0" y="0" width="1536" height="19" fill="#5f2016"/>
<rect x="32" y="0" width="211" height="19" fill="#a8a8a8"/>
<rect x="32" y="18" width="211" height="1" fill="#6a6a6a"/>
<text class="S" x="548" y="13" font-size="10.5" fill="#1a0a06" textLength="194.0" lengthAdjust="spacingAndGlyphs">Autodesk AutoCAD 2019    Detail Gording.dwg</text>
<rect x="1048" y="0" width="359" height="19" fill="#a8a8a8"/>
<rect x="1048" y="18" width="359" height="1" fill="#6a6a6a"/>
<path d="M1052,6 L1056,9.5 L1052,13 Z" fill="#f4f4f4"/>
<rect x="1060.5" y="1.5" width="143" height="16" fill="#6f6f6f" stroke="#5a5a5a" stroke-width="1"/>
<text class="S" x="1063" y="13" font-size="10" fill="#c4c4c4" textLength="98.0" lengthAdjust="spacingAndGlyphs" font-style="italic">Type a keyword or phrase</text>
<g fill="#f2f2f2" stroke="#222" stroke-width="0.8"><rect x="1207" y="8" width="5" height="8" rx="1.5"/><rect x="1214" y="8" width="5" height="8" rx="1.5"/><rect x="1208" y="4" width="3" height="5"/><rect x="1215" y="4" width="3" height="5"/></g>
<g fill="#f2f2f2" stroke="#333" stroke-width="0.8"><circle cx="1233" cy="7" r="3.5"/><path d="M1226.5,16 Q1227,11 1233,11 Q1239,11 1239.5,16 Z"/></g>
<text class="S" x="1243" y="14" font-size="10.5" fill="#ececec" textLength="29.0" lengthAdjust="spacingAndGlyphs">Sign In</text>
<path d="M1312.0,8.75 L1316.0,8.75 L1314,11.25 Z" fill="#f2f2f2"/>
<g fill="none" stroke="#45506a" stroke-width="1.3"><path d="M1324,4 L1327,4 L1329,12 L1336,12 L1338,6 L1328,6"/><circle cx="1330" cy="14.5" r="1.2"/><circle cx="1335" cy="14.5" r="1.2"/></g>
<g fill="none" stroke="#45506a" stroke-width="1.4"><path d="M1349,4 L1355,14 L1343,14 Z"/><circle cx="1349" cy="4" r="1.5"/><circle cx="1343" cy="14" r="1.5"/><circle cx="1355" cy="14" r="1.5"/></g>
<path d="M1360.0,7.75 L1364.0,7.75 L1362,10.25 Z" fill="#f2f2f2"/>
<circle cx="1386" cy="9" r="6" fill="#f2f2f2" stroke="#333" stroke-width="0.8"/>
<text class="S" x="1386" y="13" font-size="10" fill="#1a3cb0" text-anchor="middle" font-weight="bold">?</text>
<path d="M1398.0,7.75 L1402.0,7.75 L1400,10.25 Z" fill="#f2f2f2"/>
<rect x="1439" y="8.5" width="9" height="1.2" fill="#f0e8e6"/>
<g fill="none" stroke="#f0e8e6" stroke-width="1"><rect x="1476.5" y="6.5" width="6" height="6"/><path d="M1478.5,6.5 V4.5 H1484.5 V10.5 H1482.5"/></g>
<g stroke="#f0e8e6" stroke-width="1.2"><line x1="1513" y1="4.5" x2="1521" y2="12.5"/><line x1="1521" y1="4.5" x2="1513" y2="12.5"/></g>
<g>
<path d="M40,4 H50 L53,7 V15 H40 Z" stroke="none" stroke-width="1" fill="#f4f4f4"/>
<path d="M59,5 H64 L65,6 H70 V8 H61 L59,15 Z" stroke="none" stroke-width="1" fill="#e6e6e6"/>
<path d="M61,8 H72 L70,15 H59 Z" stroke="none" stroke-width="1" fill="#f2f2f2"/>
<rect x="78.5" y="3.5" width="13" height="12.5" fill="#c9c9c9"/><rect x="81" y="4" width="8" height="4.5" fill="#f4f4f4"/><rect x="81" y="11" width="8" height="4" fill="#f4f4f4"/>
<rect x="98" y="3.5" width="12.5" height="12.5" fill="#c9c9c9"/><rect x="100.5" y="4" width="7.5" height="4.5" fill="#f4f4f4"/><rect x="100.5" y="11" width="5" height="4" fill="#f4f4f4"/>
<path d="M104,14 L109,9 L111,11 L106,16 Z" fill="#f0b13c"/><circle cx="109.5" cy="9.5" r="1.3" fill="#e0432a"/>
<rect x="117.5" y="3.5" width="8" height="12" rx="1" fill="#5a5a5a" stroke="#ddd" stroke-width="0.6"/><path d="M123,10 H126 L127,11 H130 V16 H123 Z" fill="#f7c35a"/>
<rect x="139.5" y="3.5" width="8" height="12" rx="1" fill="#5a5a5a" stroke="#ddd" stroke-width="0.6"/><path d="M137,9 H142 V7 L145,10 L142,13 V11 H137 Z" fill="#47a3e6"/>
<rect x="157" y="3" width="9" height="4" fill="#f4f4f4"/><rect x="154.5" y="7" width="14" height="6" rx="1" fill="#f4f4f4"/><rect x="157" y="12" width="9" height="4" fill="#4fa8e8"/>
<path d="M176,9 L181,5 V7.5 Q187,7.5 188,13 Q185,10.5 181,10.5 V13 Z" fill="#c2c2c2"/>
<path d="M193.6,7.75 L197.6,7.75 L195.6,10.25 Z" fill="#f0f0f0"/>
<path d="M216,9 L211,5 V7.5 Q205,7.5 204,13 Q207,10.5 211,10.5 V13 Z" fill="#c2c2c2"/>
<path d="M221.7,7.75 L225.7,7.75 L223.7,10.25 Z" fill="#f0f0f0"/>
<rect x="232" y="6" width="7" height="1.3" fill="#f4f4f4"/>
<path d="M232.0,8.0 L239.0,8.0 L235.5,12.0 Z" fill="#f4f4f4"/>
</g>
<defs><linearGradient id="gapp" x1="0" y1="0" x2="0" y2="1"><stop offset="0" stop-color="#e2e2e2"/><stop offset="0.5" stop-color="#b4b4b4"/><stop offset="1" stop-color="#8f8f8f"/></linearGradient><linearGradient id="gtab" x1="0" y1="0" x2="0" y2="1"><stop offset="0" stop-color="#636363"/><stop offset="1" stop-color="#4d4d4d"/></linearGradient><linearGradient id="gtabA" x1="0" y1="0" x2="0" y2="1"><stop offset="0" stop-color="#7a7a7a"/><stop offset="1" stop-color="#5e5e5e"/></linearGradient><linearGradient id="grb" x1="0" y1="0" x2="0" y2="1"><stop offset="0" stop-color="#4b4b4b"/><stop offset="0.3" stop-color="#4b4b4b"/><stop offset="0.3" stop-color="#444"/><stop offset="0.64" stop-color="#444"/><stop offset="0.64" stop-color="#3b3b3b"/><stop offset="1" stop-color="#3b3b3b"/></linearGradient></defs>
<rect x="0" y="0" width="33" height="33" fill="#1e1e1e"/>
<rect x="1" y="1" width="31" height="31" fill="url(#gapp)"/>
<path d="M5,23 L11,3 H16 L22,23 H17 L15.5,18 H11 L9.5,23 Z M12,14.5 H14.5 L13.3,9 Z" stroke="none" stroke-width="1" fill="#c0261c"/>
<path d="M13.5,3 H16 L22,23 H18.5 Z" stroke="none" stroke-width="1" fill="#e8140e"/>
<path d="M24.5,13.75 L30.5,13.75 L27.5,17.25 Z" fill="#2b2b2b"/>
<rect x="33" y="19" width="1503" height="16" fill="#545655"/>
<rect x="33" y="18.6" width="1503" height="1" fill="#3c3c3c"/>
<rect x="0" y="33" width="33" height="2" fill="#545655"/>
<rect x="0" y="35" width="1536" height="1" fill="#3a3c3c"/>
<path d="M38.5,35.5 V22.5 H77.5 V35.5" stroke="#3d3d3d" stroke-width="1" fill="#5c5c5c"/>
<text class="S" x="44" y="31.5" font-size="10.5" fill="#e4e4e4" textLength="26.6" lengthAdjust="spacingAndGlyphs">Home</text>
<text class="S" x="86" y="31.5" font-size="10.5" fill="#e4e4e4" textLength="24.0" lengthAdjust="spacingAndGlyphs">Insert</text>
<text class="S" x="126" y="31.5" font-size="10.5" fill="#e4e4e4" textLength="39.0" lengthAdjust="spacingAndGlyphs">Annotate</text>
<text class="S" x="181" y="31.5" font-size="10.5" fill="#e4e4e4" textLength="45.0" lengthAdjust="spacingAndGlyphs">Parametric</text>
<text class="S" x="242.5" y="31.5" font-size="10.5" fill="#e4e4e4" textLength="19.5" lengthAdjust="spacingAndGlyphs">View</text>
<text class="S" x="278.5" y="31.5" font-size="10.5" fill="#e4e4e4" textLength="34.2" lengthAdjust="spacingAndGlyphs">Manage</text>
<text class="S" x="329" y="31.5" font-size="10.5" fill="#e4e4e4" textLength="30.0" lengthAdjust="spacingAndGlyphs">Output</text>
<text class="S" x="375" y="31.5" font-size="10.5" fill="#e4e4e4" textLength="34.0" lengthAdjust="spacingAndGlyphs">Add-ins</text>
<text class="S" x="425" y="31.5" font-size="10.5" fill="#e4e4e4" textLength="49.0" lengthAdjust="spacingAndGlyphs">Collaborate</text>
<text class="S" x="490" y="31.5" font-size="10.5" fill="#e4e4e4" textLength="54.6" lengthAdjust="spacingAndGlyphs">Express Tools</text>
<text class="S" x="561" y="31.5" font-size="10.5" fill="#e4e4e4" textLength="61.0" lengthAdjust="spacingAndGlyphs">Featured Apps</text>
<rect x="648" y="25" width="10" height="6" rx="1.5" fill="#f0f0f0"/><path d="M650.5,29.5 L653,26.5 L655.5,29.5 Z" fill="#555"/>
<path d="M661.5,26.75 L665.5,26.75 L663.5,29.25 Z" fill="#f0f0f0"/>
<rect x="0" y="36" width="1536" height="78" fill="url(#grb)"/>
<rect x="1" y="36" width="179" height="78" fill="#595959"/>
<rect x="1" y="99" width="179" height="5" fill="#535353"/>
<rect x="1" y="104" width="179" height="9.5" fill="#4b4b4b"/>
<rect x="179" y="36" width="1.2" height="78" fill="#434343"/>
<rect x="180" y="36" width="200" height="78" fill="#595959"/>
<rect x="180" y="99" width="200" height="5" fill="#535353"/>
<rect x="180" y="104" width="200" height="9.5" fill="#4b4b4b"/>
<rect x="379" y="36" width="1.2" height="78" fill="#434343"/>
<rect x="380" y="36" width="151" height="78" fill="#595959"/>
<rect x="380" y="99" width="151" height="5" fill="#535353"/>
<rect x="380" y="104" width="151" height="9.5" fill="#4b4b4b"/>
<rect x="530" y="36" width="1.2" height="78" fill="#434343"/>
<rect x="531" y="36" width="219" height="78" fill="#595959"/>
<rect x="531" y="99" width="219" height="5" fill="#535353"/>
<rect x="531" y="104" width="219" height="9.5" fill="#4b4b4b"/>
<rect x="749" y="36" width="1.2" height="78" fill="#434343"/>
<rect x="750" y="36" width="129.5" height="78" fill="#595959"/>
<rect x="750" y="99" width="129.5" height="5" fill="#535353"/>
<rect x="750" y="104" width="129.5" height="9.5" fill="#4b4b4b"/>
<rect x="878.5" y="36" width="1.2" height="78" fill="#434343"/>
<rect x="879.5" y="36" width="212.0" height="78" fill="#595959"/>
<rect x="879.5" y="99" width="212.0" height="5" fill="#535353"/>
<rect x="879.5" y="104" width="212.0" height="9.5" fill="#4b4b4b"/>
<rect x="1090.5" y="36" width="1.2" height="78" fill="#434343"/>
<rect x="1091.5" y="36" width="55.0" height="78" fill="#595959"/>
<rect x="1091.5" y="99" width="55.0" height="5" fill="#535353"/>
<rect x="1091.5" y="104" width="55.0" height="9.5" fill="#4b4b4b"/>
<rect x="1145.5" y="36" width="1.2" height="78" fill="#434343"/>
<rect x="1146.5" y="36" width="77.5" height="78" fill="#595959"/>
<rect x="1146.5" y="99" width="77.5" height="5" fill="#535353"/>
<rect x="1146.5" y="104" width="77.5" height="9.5" fill="#4b4b4b"/>
<rect x="1223" y="36" width="1.2" height="78" fill="#434343"/>
<rect x="1224" y="36" width="64.5" height="78" fill="#595959"/>
<rect x="1224" y="99" width="64.5" height="5" fill="#535353"/>
<rect x="1224" y="104" width="64.5" height="9.5" fill="#4b4b4b"/>
<rect x="1287.5" y="36" width="1.2" height="78" fill="#434343"/>
<rect x="1288.5" y="36" width="49.0" height="78" fill="#595959"/>
<rect x="1288.5" y="99" width="49.0" height="5" fill="#535353"/>
<rect x="1288.5" y="104" width="49.0" height="9.5" fill="#4b4b4b"/>
<rect x="1336.5" y="36" width="1.2" height="78" fill="#434343"/>
<rect x="0" y="36" width="1.5" height="78" fill="#434343"/>
<rect x="0" y="113" width="1536" height="1" fill="#303030"/>
<rect x="0" y="114" width="1536" height="1.8" fill="#4a4a4a"/>
<text class="S" x="74.5" y="109.5" font-size="10.5" fill="#e6e6e6" textLength="21.5" lengthAdjust="spacingAndGlyphs">Draw</text>
<path d="M101.0,103.75 L107.0,103.75 L104,107.25 Z" fill="#ececec"/>
<text class="S" x="260.4" y="109.5" font-size="10.5" fill="#e6e6e6" textLength="30.6" lengthAdjust="spacingAndGlyphs">Modify</text>
<path d="M295.4,103.75 L301.4,103.75 L298.4,107.25 Z" fill="#ececec"/>
<text class="S" x="426" y="109.5" font-size="10.5" fill="#e6e6e6" textLength="48.0" lengthAdjust="spacingAndGlyphs">Annotation</text>
<path d="M480.0,103.75 L486.0,103.75 L483,107.25 Z" fill="#ececec"/>
<text class="S" x="622.5" y="109.5" font-size="10.5" fill="#e6e6e6" textLength="26.5" lengthAdjust="spacingAndGlyphs">Layers</text>
<path d="M654.0,103.75 L660.0,103.75 L657,107.25 Z" fill="#ececec"/>
<text class="S" x="798" y="109.5" font-size="10.5" fill="#e6e6e6" textLength="23.0" lengthAdjust="spacingAndGlyphs">Block</text>
<path d="M826.0,103.75 L832.0,103.75 L829,107.25 Z" fill="#ececec"/>
<text class="S" x="952" y="109.5" font-size="10.5" fill="#e6e6e6" textLength="44.0" lengthAdjust="spacingAndGlyphs">Properties</text>
<path d="M1002.0,103.75 L1008.0,103.75 L1005,107.25 Z" fill="#ececec"/>
<text class="S" x="1098.5" y="109.5" font-size="10.5" fill="#e6e6e6" textLength="30.8" lengthAdjust="spacingAndGlyphs">Groups</text>
<path d="M1133.0,103.75 L1139.0,103.75 L1136,107.25 Z" fill="#ececec"/>
<text class="S" x="1164" y="109.5" font-size="10.5" fill="#e6e6e6" textLength="30.7" lengthAdjust="spacingAndGlyphs">Utilities</text>
<path d="M1200.0,103.75 L1206.0,103.75 L1203,107.25 Z" fill="#ececec"/>
<text class="S" x="1236" y="109.5" font-size="10.5" fill="#e6e6e6" textLength="41.0" lengthAdjust="spacingAndGlyphs">Clipboard</text>
<text class="S" x="1292.6" y="109.5" font-size="10.5" fill="#e6e6e6" textLength="19.9" lengthAdjust="spacingAndGlyphs">View</text>
<path d="M1317.0,103.75 L1323.0,103.75 L1320,107.25 Z" fill="#ececec"/>
<path d="M1082,104.5 L1085.5,108" stroke="#e8e8e8" stroke-width="1.1" fill="none"/><path d="M1086.5,105 V109 H1082.5 Z" fill="#e8e8e8"/>
<path d="M1329,104.5 L1332.5,108" stroke="#e8e8e8" stroke-width="1.1" fill="none"/><path d="M1333.5,105 V109 H1329.5 Z" fill="#e8e8e8"/>
<line x1="9" y1="66" x2="30" y2="43" stroke="#d8d8d8" stroke-width="1"/>
<rect x="7.45" y="64.45" width="2.6" height="2.6" fill="#5aaff0"/>
<rect x="28.95" y="41.95" width="2.6" height="2.6" fill="#5aaff0"/>
<text class="S" x="9.5" y="79.5" font-size="10.5" fill="#e8e8e8" textLength="17.5" lengthAdjust="spacingAndGlyphs">Line</text>
<path d="M41.5,62.5 H57 Q67,62 66,55 Q65,49 57,49.5" stroke="#d8d8d8" stroke-width="1" fill="none"/>
<rect x="39.95" y="60.95" width="2.6" height="2.6" fill="#5aaff0"/>
<rect x="55.95" y="60.95" width="2.6" height="2.6" fill="#5aaff0"/>
<rect x="55.95" y="48.45" width="2.6" height="2.6" fill="#5aaff0"/>
<text class="S" x="36.5" y="79.5" font-size="10.5" fill="#e8e8e8" textLength="33.5" lengthAdjust="spacingAndGlyphs">Polyline</text>
<rect x="72.5" y="39.5" width="41" height="57" fill="#878787" stroke="#3a3a3a" stroke-width="1"/>
<rect x="73" y="69" width="40" height="1" fill="#3a3a3a"/>
<circle cx="92.5" cy="54" r="12.5" fill="none" stroke="#dedede" stroke-width="1"/>
<line x1="92.5" y1="54" x2="98" y2="48" stroke="#5aaff0" stroke-width="1"/>
<rect x="91" y="52.5" width="3" height="3" fill="#5aaff0"/>
<rect x="96.5" y="46.5" width="3" height="3" fill="#5aaff0"/>
<text class="S" x="81" y="79.5" font-size="10.5" fill="#f0f0f0" textLength="24.0" lengthAdjust="spacingAndGlyphs">Circle</text>
<path d="M90.0,84.5 L95.0,84.5 L92.5,87.5 Z" fill="#f0f0f0"/>
<path d="M119.5,65 Q122,48 141,43.5" stroke="#d8d8d8" stroke-width="1" fill="none"/>
<rect x="117.95" y="63.45" width="2.6" height="2.6" fill="#5aaff0"/>
<rect x="124.45" y="49.95" width="2.6" height="2.6" fill="#5aaff0"/>
<rect x="139.45" y="42.45" width="2.6" height="2.6" fill="#5aaff0"/>
<text class="S" x="122.5" y="79.5" font-size="10.5" fill="#e8e8e8" textLength="14.5" lengthAdjust="spacingAndGlyphs">Arc</text>
<path d="M127.0,84.0 L132.0,84.0 L129.5,87.0 Z" fill="#ececec"/>
<rect x="150.5" y="44.5" width="11" height="8" fill="none" stroke="#d8d8d8"/>
<rect x="149.5" y="43.5" width="2" height="2" fill="#5aaff0"/>
<rect x="160.5" y="51.5" width="2" height="2" fill="#5aaff0"/>
<path d="M167.5,47.0 L172.5,47.0 L170,50.0 Z" fill="#ececec"/>
<ellipse cx="155" cy="68" rx="6" ry="4" fill="none" stroke="#d8d8d8"/>
<rect x="154" y="67" width="2" height="2" fill="#5aaff0"/>
<rect x="159.5" y="66.5" width="2" height="2" fill="#5aaff0"/>
<rect x="154" y="63" width="2" height="2" fill="#5aaff0"/>
<path d="M167.5,66.0 L172.5,66.0 L170,69.0 Z" fill="#ececec"/>
<rect x="151" y="82" width="11" height="10" fill="#3d6fb0" stroke="#d8d8d8"/><path d="M149,83 H165 M149,91 H165 M152,80 V94 M161,80 V94" stroke="#d8d8d8"/>
<path d="M167.5,85.5 L172.5,85.5 L170,88.5 Z" fill="#ececec"/>
<text class="S" x="203.7" y="52" font-size="10.5" fill="#e8e8e8" textLength="23.8" lengthAdjust="spacingAndGlyphs">Move</text>
<text class="S" x="203.7" y="71.3" font-size="10.5" fill="#e8e8e8" textLength="22.3" lengthAdjust="spacingAndGlyphs">Copy</text>
<text class="S" x="203.7" y="90.4" font-size="10.5" fill="#e8e8e8" textLength="29.0" lengthAdjust="spacingAndGlyphs">Stretch</text>
<text class="S" x="261" y="52" font-size="10.5" fill="#e8e8e8" textLength="27.0" lengthAdjust="spacingAndGlyphs">Rotate</text>
<text class="S" x="261" y="71.3" font-size="10.5" fill="#e8e8e8" textLength="26.4" lengthAdjust="spacingAndGlyphs">Mirror</text>
<text class="S" x="261" y="90.4" font-size="10.5" fill="#e8e8e8" textLength="22.0" lengthAdjust="spacingAndGlyphs">Scale</text>
<text class="S" x="316.4" y="52" font-size="10.5" fill="#e8e8e8" textLength="17.6" lengthAdjust="spacingAndGlyphs">Trim</text>
<text class="S" x="316.4" y="71.3" font-size="10.5" fill="#e8e8e8" textLength="19.6" lengthAdjust="spacingAndGlyphs">Fillet</text>
<text class="S" x="316.4" y="90.4" font-size="10.5" fill="#e8e8e8" textLength="21.6" lengthAdjust="spacingAndGlyphs">Array</text>
<path d="M343.5,48.5 L348.5,48.5 L346,51.5 Z" fill="#ececec"/>
<path d="M343.5,67.5 L348.5,67.5 L346,70.5 Z" fill="#ececec"/>
<path d="M343.5,86.5 L348.5,86.5 L346,89.5 Z" fill="#ececec"/>
<g stroke="#f0f0f0" stroke-width="1.2" fill="#f0f0f0"><line x1="186.5" y1="48.5" x2="198.5" y2="48.5"/><line x1="192.5" y1="42.5" x2="192.5" y2="54.5"/><path d="M186,48.5 L188.5,46.5 V50.5 Z M199,48.5 L196.5,46.5 V50.5 Z M192.5,42 L190.5,44.5 H194.5 Z M192.5,55 L190.5,52.5 H194.5 Z" stroke-width="0.5"/></g>
<g fill="none" stroke="#d8d8d8" stroke-width="1"><circle cx="189" cy="64.5" r="2.2"/><path d="M193,63 H197 V67 M195.5,66 L197,67.5 L198.5,66"/></g>
<g fill="none" stroke="#5aaff0" stroke-width="1.2"><circle cx="191" cy="71.5" r="2.3"/><circle cx="196" cy="71.5" r="2.3"/></g>
<path d="M186.5,81.5 H192 V93.5 H186.5 Z" fill="none" stroke="#d8d8d8"/><path d="M192,81.5 H195 L199,93.5 H192" fill="none" stroke="#5aaff0"/><path d="M190,89 L193,89 M192,88 L193.5,89 L192,90" stroke="#f0f0f0"/>
<path d="M250,44 A6,6 0 1 1 245,50" fill="none" stroke="#e0e0e0" stroke-width="1.2"/><path d="M249,41.5 L252.5,44 L249,46.5 Z" fill="#e0e0e0"/>
<path d="M244.5,74.5 L250,63 V74.5 Z" fill="none" stroke="#d8d8d8"/><path d="M251.5,63 L256,74.5 H251.5 Z" fill="none" stroke="#5aaff0"/>
<rect x="244.5" y="85.5" width="7" height="8" fill="none" stroke="#d8d8d8"/><path d="M244.5,85.5 V80.5 H256.5 V93.5 H251.5" fill="none" stroke="#5aaff0"/>
<path d="M299,43 H312" stroke="#5aaff0" stroke-dasharray="2,1"/><g fill="none" stroke="#e8e8e8" stroke-width="1.1"><path d="M303,43 L308,51 M308,43 L303,51"/><circle cx="303" cy="53" r="1.8"/><circle cx="308" cy="53" r="1.8"/></g>
<path d="M299.5,74 V69 Q300,62 307,62" fill="none" stroke="#5aaff0" stroke-width="1.2"/><path d="M307,62 H312" stroke="#d8d8d8"/><path d="M299.5,74 V76" stroke="#d8d8d8"/>
<g fill="none" stroke="#d8d8d8"><rect x="300.5" y="81.5" width="3.5" height="3.5"/><rect x="306.5" y="81.5" width="3.5" height="3.5"/></g><g fill="none" stroke="#5aaff0"><rect x="300.5" y="87.5" width="3.5" height="3.5"/><rect x="306.5" y="87.5" width="3.5" height="3.5"/></g>
<path d="M362,49 L370,42 L372,44 L364,51 Z" fill="#f2c46b"/><path d="M360,51 L362,49 L364,51 L362,53 Z" fill="#e0452a"/><path d="M360,53.5 H372" stroke="#5aaff0"/>
<path d="M360.5,64.5 L363,62 H371.5 V71 L369,73.5 H360.5 Z M360.5,64.5 H369 V73.5 M369,64.5 L371.5,62" fill="none" stroke="#5aaff0"/><rect x="362" y="66" width="6" height="6.5" fill="none" stroke="#d8d8d8"/>
<path d="M372,82.5 H365 Q360.5,82.5 360.5,87 Q360.5,91.5 365,91.5 H372 M372,85 H365.5 Q363,85 363,87 Q363,89 365.5,89 H372" fill="none" stroke="#5aaff0"/>
<path d="M390.5,65.5 L398.5,43 H402.5 L410.5,65.5 H407.5 L405,58.5 H396 L393.5,65.5 Z M397,55.5 H404 L400.5,46 Z" stroke="none" stroke-width="1" fill="#e6e6e6"/>
<text class="S" x="392.3" y="79" font-size="10.5" fill="#e8e8e8" textLength="15.7" lengthAdjust="spacingAndGlyphs">Text</text>
<path d="M397.5,83.5 L402.5,83.5 L400,86.5 Z" fill="#ececec"/>
<g stroke="#d6d6d6" stroke-width="1"><line x1="429.5" y1="41.5" x2="429.5" y2="67"/><line x1="454.5" y1="41.5" x2="454.5" y2="67"/><line x1="431" y1="46.5" x2="453" y2="46.5"/></g>
<path d="M430,46.5 L433,45 V48 Z M454,46.5 L451,45 V48 Z" fill="#d6d6d6"/>
<g stroke="#f2b84b" stroke-width="1.6"><line x1="442" y1="55" x2="442" y2="58"/><line x1="435.5" y1="57" x2="437.5" y2="59.5"/><line x1="448.5" y1="57" x2="446.5" y2="59.5"/><line x1="432.5" y1="63.5" x2="435.5" y2="63.5"/><line x1="448.5" y1="63.5" x2="451.5" y2="63.5"/></g>
<text class="S" x="420" y="79" font-size="10.5" fill="#e8e8e8" textLength="45.0" lengthAdjust="spacingAndGlyphs">Dimension</text>
<g stroke="#d6d6d6"><line x1="471.5" y1="43" x2="471.5" y2="54"/><line x1="484.5" y1="43" x2="484.5" y2="54"/></g><line x1="472" y1="46.5" x2="484" y2="46.5" stroke="#5aaff0"/>
<text class="S" x="488.9" y="52.1" font-size="10.5" fill="#e8e8e8" textLength="24.9" lengthAdjust="spacingAndGlyphs">Linear</text>
<path d="M520.0,48.5 L525.0,48.5 L522.5,51.5 Z" fill="#ececec"/>
<path d="M472,73 L479,65 Q480,64 481,64" fill="none" stroke="#d6d6d6"/><circle cx="482.5" cy="63.5" r="2.3" fill="none" stroke="#d6d6d6"/><path d="M471,73.5 L471.5,70 L474,72 Z" fill="#d6d6d6"/>
<text class="S" x="488.9" y="70.9" font-size="10.5" fill="#e8e8e8" textLength="27.6" lengthAdjust="spacingAndGlyphs">Leader</text>
<path d="M522.2,67.0 L527.2,67.0 L524.7,70.0 Z" fill="#ececec"/>
<g fill="none" stroke="#d6d6d6" stroke-width="0.9"><rect x="471.5" y="81.5" width="13" height="11"/><path d="M471.5,84.5 H484.5 M471.5,87.5 H484.5 M471.5,90 H484.5 M475.5,84.5 V92.5 M480,84.5 V92.5"/></g>
<text class="S" x="488.9" y="90.2" font-size="10.5" fill="#e8e8e8" textLength="20.8" lengthAdjust="spacingAndGlyphs">Table</text>
<g fill="#d8d8d8"><path d="M550,47 L555,42 H569 L564,47 Z"/><path d="M545,54 L550,49 H566 L561,54 Z"/><path d="M545,61 L550,56 H562 L557,61 Z"/></g>
<rect x="559" y="52" width="10.5" height="15" rx="1" fill="#efefef" stroke="#777" stroke-width="0.6"/><rect x="560.5" y="54" width="7.5" height="5" fill="#6fb6ee"/><path d="M561,62 H567 M561,64.5 H567" stroke="#777" stroke-width="0.8"/>
<text class="S" x="546.5" y="79.4" font-size="10.5" fill="#e8e8e8" textLength="22.5" lengthAdjust="spacingAndGlyphs">Layer</text>
<text class="S" x="536.7" y="91.4" font-size="10.5" fill="#e8e8e8" textLength="41.9" lengthAdjust="spacingAndGlyphs">Properties</text>
<rect x="582.5" y="40.5" width="165" height="17" fill="#474747" stroke="#2f2f2f" stroke-width="1"/>
<rect x="583" y="41" width="164" height="1" fill="#5a5a5a"/>
<circle cx="591.5" cy="47.5" r="3.6" fill="#f7c75d"/><rect x="590" y="51" width="3" height="3.5" fill="#f2f2f2"/>
<circle cx="606" cy="48.5" r="3" fill="#f7c75d"/><g stroke="#f7c75d" stroke-width="1"><path d="M606,43 V44.5 M606,52.5 V54 M600.5,48.5 H602 M610,48.5 H611.5 M602,44.5 L603,45.5 M609,51.5 L610,52.5 M610,44.5 L609,45.5 M603,51.5 L602,52.5"/></g>
<rect x="616" y="48" width="9" height="7" fill="#f7c75d"/><path d="M621,48 V45 Q621,42.5 623.5,42.5 Q626,42.5 626,45 V46" fill="none" stroke="#f7c75d" stroke-width="1.4"/>
<rect x="632" y="44" width="11" height="11" fill="#00ff00" stroke="#222" stroke-width="1"/>
<text class="S" x="648" y="53" font-size="10.5" fill="#e0e0e0" textLength="5.0" lengthAdjust="spacingAndGlyphs">0</text>
<path d="M740.5,46.75 L746.5,46.75 L743.5,50.25 Z" fill="#f0f0f0"/>
<g fill="#d8d8d8"><path d="M585,66 L589,62 H596 L592,66 Z"/><path d="M604,64 L608,61 H616 L612,64 Z"/><path d="M604,66.5 L608,63.5 H616 L612,66.5 Z"/><path d="M604,69 L608,66 H616 L612,69 Z"/><path d="M623,65 L627,61 H634 L630,65 Z"/><path d="M642,65 L646,61 H653 L649,65 Z"/><path d="M662,67 L666,64 H675 L671,67 Z"/><path d="M662,69.5 L666,66.5 H675 L671,69.5 Z"/><path d="M662,72 L666,69 H675 L671,72 Z"/></g>
<circle cx="595" cy="68.5" r="2.6" fill="#5aaff0"/><rect x="594" y="71" width="2" height="2.5" fill="#eee"/>
<path d="M604,71.5 H612" stroke="#5aaff0" stroke-width="1.2"/><path d="M610,75 L615,70 M615,70 L612.5,70.5 M615,70 L614.5,72.5" stroke="#e6e6e6" stroke-width="1"/>
<circle cx="631" cy="70" r="3" fill="#5aaff0"/>
<rect x="650" y="69" width="6" height="5" fill="#5aaff0"/><path d="M651,69 V67 Q653,64.5 655,67 V69" fill="none" stroke="#5aaff0" stroke-width="1.1"/>
<circle cx="668.5" cy="62.5" r="2.6" fill="#d8d8d8"/><path d="M662,68 L666,65 H675" stroke="#5aaff0" stroke-width="1.2" fill="none"/>
<text class="S" x="679" y="71.2" font-size="10.5" fill="#e8e8e8" textLength="57.0" lengthAdjust="spacingAndGlyphs">Make Current</text>
<g fill="#d8d8d8"><path d="M585,83 L589,80 H596 L592,83 Z"/><path d="M585,85.5 L589,82.5 H596 L592,85.5 Z"/><path d="M585,88 L589,85 H596 L592,88 Z"/><path d="M604,83 L608,80 H616 L612,83 Z"/><path d="M604,85.5 L608,82.5 H616 L612,85.5 Z"/><path d="M604,88 L608,85 H616 L612,88 Z"/><path d="M623,83 L627,80 H634 L630,83 Z"/><path d="M623,85.5 L627,82.5 H634 L630,85.5 Z"/><path d="M623,88 L627,85 H634 L630,88 Z"/><path d="M642,84 L646,80 H653 L649,84 Z"/><path d="M662,83 L666,80 H675 L671,83 Z"/><path d="M662,85.5 L666,82.5 H675 L671,85.5 Z"/><path d="M662,88 L666,85 H675 L671,88 Z"/></g>
<circle cx="595" cy="88" r="2.6" fill="#f7c75d"/><rect x="594" y="90.5" width="2" height="2.5" fill="#eee"/>
<path d="M604,88.5 H612" stroke="#5aaff0" stroke-width="1.2"/><path d="M610,94 L615,89" stroke="#e6e6e6"/>
<circle cx="632.5" cy="89" r="2.2" fill="#f7c75d"/>
<rect x="648" y="88" width="6" height="5" fill="#f7c75d"/><path d="M652,88 V86 Q654,83.5 656,86" fill="none" stroke="#f7c75d" stroke-width="1.1"/>
<path d="M668,92 L673,86 L675.5,88 L670.5,94 Z" fill="#f7c75d"/>
<text class="S" x="679" y="90.6" font-size="10.5" fill="#e8e8e8" textLength="51.6" lengthAdjust="spacingAndGlyphs">Match Layer</text>
<path d="M767,40 H777 L781,44 V63 H767 Z" fill="#6fb6ee"/><path d="M777,40 V44 H781" fill="#cfe6f8"/>
<rect x="755" y="48" width="18" height="12" fill="#878787" stroke="#d6d6d6" stroke-width="1"/><circle cx="773" cy="60.5" r="6" fill="#878787" fill-opacity="0.7" stroke="#d6d6d6" stroke-width="1"/>
<text class="S" x="756" y="78.5" font-size="10.5" fill="#e8e8e8" textLength="23.9" lengthAdjust="spacingAndGlyphs">Insert</text>
<path d="M765.5,83.0 L770.5,83.0 L768,86.0 Z" fill="#ececec"/>
<rect x="787" y="45" width="8" height="6" fill="#6a6a6a" stroke="#d6d6d6" stroke-width="0.8"/><circle cx="795" cy="51" r="2.8" fill="none" stroke="#d6d6d6" stroke-width="0.8"/>
<circle cx="796" cy="44" r="2.5" fill="#f7c75d"/>
<text class="S" x="803.6" y="52" font-size="10.5" fill="#e8e8e8" textLength="27.2" lengthAdjust="spacingAndGlyphs">Create</text>
<rect x="787" y="64" width="8" height="6" fill="#6a6a6a" stroke="#d6d6d6" stroke-width="0.8"/><circle cx="795" cy="70" r="2.8" fill="none" stroke="#d6d6d6" stroke-width="0.8"/>
<path d="M793,68 L798,62 L800,64 L795,70 Z" fill="#f7c75d"/><rect x="797" y="61" width="3" height="2.5" fill="#e0452a" transform="rotate(40 798 62)"/>
<text class="S" x="803.6" y="71" font-size="10.5" fill="#e8e8e8" textLength="15.9" lengthAdjust="spacingAndGlyphs">Edit</text>
<path d="M787,82 H795 L798,86 L794,93 L787,86 Z" fill="none" stroke="#f0f0f0" stroke-width="1.2"/><path d="M792,88 L797,82 L799,84 L794,90 Z" fill="#f7c75d"/>
<text class="S" x="803.6" y="90.4" font-size="10.5" fill="#e8e8e8" textLength="60.0" lengthAdjust="spacingAndGlyphs">Edit Attributes</text>
<path d="M869.5,86.5 L874.5,86.5 L872,89.5 Z" fill="#ececec"/>
<rect x="892.5" y="41" width="17" height="24" rx="1" fill="#d9d9d9" stroke="#999" stroke-width="0.6"/><rect x="895" y="43.5" width="12" height="8" fill="#7dbdf0" stroke="#555" stroke-width="0.5"/>
<path d="M895,56 H903 M895,59.5 H901" stroke="#666" stroke-width="0.8"/>
<path d="M903,64 L911,56 L915,60 L907,68 Z" fill="#f2c46b"/><path d="M910,55 L914,51 L918,55 L914,59 Z" fill="#f0f0f0"/>
<text class="S" x="891.75" y="79" font-size="10.5" fill="#e8e8e8" textLength="26.9" lengthAdjust="spacingAndGlyphs">Match</text>
<text class="S" x="883.6" y="91" font-size="10.5" fill="#e8e8e8" textLength="42.4" lengthAdjust="spacingAndGlyphs">Properties</text>
<circle cx="937.3" cy="47.8" r="6.3" fill="#5aaff0"/><path d="M937.3,47.8 L937.3,41.5 A6.3,6.3 0 0 1 943.6,47.8 Z" fill="#f7c75d"/><path d="M937.3,47.8 L943.6,47.8 A6.3,6.3 0 0 1 938,54 Z" fill="#e05a2a"/><path d="M937.3,47.8 L938,54 A6.3,6.3 0 0 1 931.5,50 Z" fill="#a040d0"/><path d="M937.3,47.8 L931.5,50 A6.3,6.3 0 0 1 933,43 Z" fill="#46b24a"/>
<g fill="#e6e6e6"><rect x="931" y="60.5" width="12.5" height="1.2"/><rect x="931" y="63.5" width="12.5" height="1.6"/><rect x="931" y="67" width="12.5" height="2.2"/><rect x="931" y="71" width="12.5" height="2.8"/></g>
<g stroke="#d6d6d6" stroke-width="0.9" stroke-dasharray="2,1"><path d="M931,80.5 H943 M931,83.5 H943 M931,86.5 H943 M931,89.5 H943 M931,92 H943"/></g>
<rect x="945.5" y="40.5" width="143.5" height="17.0" fill="#474747" stroke="#2f2f2f" stroke-width="1"/>
<rect x="946" y="41.0" width="142.5" height="1" fill="#5c5c5c"/>
<path d="M1081.0,47.25 L1087.0,47.25 L1084,50.75 Z" fill="#f0f0f0"/>
<rect x="945.5" y="58.5" width="143.5" height="16.700000000000003" fill="#474747" stroke="#2f2f2f" stroke-width="1"/>
<rect x="946" y="59.0" width="142.5" height="1" fill="#5c5c5c"/>
<path d="M1081.0,65.1 L1087.0,65.1 L1084,68.6 Z" fill="#f0f0f0"/>
<rect x="945.5" y="78" width="143.5" height="16.400000000000006" fill="#474747" stroke="#2f2f2f" stroke-width="1"/>
<rect x="946" y="78.5" width="142.5" height="1" fill="#5c5c5c"/>
<path d="M1081.0,84.45 L1087.0,84.45 L1084,87.95 Z" fill="#f0f0f0"/>
<rect x="956" y="42.5" width="12.5" height="12.5" fill="#00ff00" stroke="#6a6a6a" stroke-width="1"/>
<text class="S" x="976.6" y="51.7" font-size="10.5" fill="#e8e8e8" textLength="33.0" lengthAdjust="spacingAndGlyphs">ByLayer</text>
<rect x="948" y="66.3" width="52" height="1" fill="#e0e0e0"/>
<text class="S" x="1001.3" y="70" font-size="10.5" fill="#e8e8e8" textLength="33.0" lengthAdjust="spacingAndGlyphs">ByLayer</text>
<rect x="948" y="86" width="52" height="1" fill="#e0e0e0"/>
<text class="S" x="1001.3" y="89" font-size="10.5" fill="#e8e8e8" textLength="37.5" lengthAdjust="spacingAndGlyphs">BYLAYER</text>
<path d="M1099,44 H1097 V66 H1099 M1116,52 H1118 V66 H1116" fill="none" stroke="#e6e6e6" stroke-width="1.2"/>
<path d="M1101,50 H1106 L1107,51 H1110 V55 H1101 Z" fill="none" stroke="#5aaff0" stroke-width="1"/><circle cx="1107" cy="60" r="3" fill="#a8a8a8"/>
<path d="M1115,48 L1117,42.5 L1119,48 L1124,46.5 L1120.5,50 L1124,53.5 L1119,52 L1117,57.5 L1115,52 L1110,53.5 L1113.5,50 L1110,46.5 Z" fill="#f7c75d"/>
<text class="S" x="1095.7" y="79.4" font-size="10.5" fill="#e8e8e8" textLength="26.2" lengthAdjust="spacingAndGlyphs">Group</text>
<g fill="none" stroke="#d6d6d6" stroke-width="0.9"><rect x="1130.5" y="43" width="4" height="3" stroke="#5aaff0"/><circle cx="1132.5" cy="51" r="2"/><path d="M1137,42.5 H1139 V53 H1137"/></g><path d="M1136.5,47.5 L1141,52 M1141,47.5 L1136.5,52" stroke="#e0452a" stroke-width="1.2"/>
<g fill="none" stroke="#d6d6d6" stroke-width="0.9"><path d="M1130,61.5 H1128.5 V73 H1130"/><rect x="1131" y="62" width="3.5" height="3" stroke="#5aaff0"/><circle cx="1132.5" cy="69.5" r="2"/></g><path d="M1135,72 L1140,67 L1142,69 L1137,74 Z" fill="#f7c75d"/>
<rect x="1126" y="79" width="18" height="16" fill="#5c7ea6" stroke="#364a63" stroke-width="1"/>
<path d="M1129.5,81.5 V92.5 M1131,81.5 H1138 M1131,92.5 H1134" stroke="#8fc0e8" stroke-width="0.9" stroke-dasharray="1.5,1"/><path d="M1135,84 L1135,93 L1137.5,90.5 L1140,94 L1141,93 L1139,89.5 L1142,89.5 Z" fill="#f4f4f4"/>
<g stroke="#d6d6d6" stroke-width="1"><line x1="1164.5" y1="48" x2="1164.5" y2="54"/><line x1="1186.5" y1="48" x2="1186.5" y2="54"/><line x1="1165" y1="51" x2="1186" y2="51"/></g>
<path d="M1165,51 L1168,49.5 V52.5 Z M1186,51 L1183,49.5 V52.5 Z" fill="#d6d6d6"/><rect x="1164" y="56" width="23" height="4.5" fill="#f2c46b"/>
<text class="S" x="1157.4" y="79.4" font-size="10.5" fill="#e8e8e8" textLength="36.0" lengthAdjust="spacingAndGlyphs">Measure</text>
<path d="M1173.0,84.0 L1178.0,84.0 L1175.5,87.0 Z" fill="#ececec"/>
<path d="M1206,47 V55 L1208,53 L1210,56.5 L1211,56 L1209.5,52.5 L1212,52.5 Z" fill="#f0f0f0"/><rect x="1211" y="48.5" width="8" height="7" fill="#e8e8e8"/><path d="M1213,50.5 H1217 M1213,53 H1217" stroke="#5aaff0"/><path d="M1210,42 L1208,47 H1211 L1209,50 L1213,45 H1210.5 L1212.5,42 Z" fill="#f7c75d"/>
<rect x="1206.5" y="61.5" width="11" height="11" fill="none" stroke="#5aaff0" stroke-dasharray="1.5,1"/><rect x="1208.5" y="63.5" width="6" height="7" fill="none" stroke="#7aa8cc"/><path d="M1212,64 V73 L1214,71 L1216,74.5 L1217,74 L1215.5,70.5 L1218,70.5 Z" fill="#f0f0f0"/>
<rect x="1207.5" y="81" width="10" height="13" fill="none" stroke="#e0e0e0"/><rect x="1209.5" y="83" width="6" height="2.5" fill="#e0e0e0"/><path d="M1209,88 H1216 M1209,90.5 H1216 M1211.5,87 V93 M1214,87 V93" stroke="#e0e0e0" stroke-width="0.8"/>
<rect x="1236" y="44" width="17" height="20" fill="#dba85f"/><rect x="1240" y="41" width="9" height="4" rx="1" fill="#e6e6e6"/>
<path d="M1242,50 H1253 L1257,54 V67 H1242 Z" fill="#d9d9d9" stroke="#bbb" stroke-width="0.5"/>
<text class="S" x="1235.5" y="79.4" font-size="10.5" fill="#e8e8e8" textLength="22.0" lengthAdjust="spacingAndGlyphs">Paste</text>
<path d="M1244.0,84.0 L1249.0,84.0 L1246.5,87.0 Z" fill="#ececec"/>
<rect x="1270" y="42" width="10" height="11" fill="none" stroke="#d6d6d6" stroke-width="1.1"/><path d="M1272,45 H1277 M1272,47.5 H1276 M1272,50 H1275" stroke="#d6d6d6"/><path d="M1276,48 L1283,55 M1283,48 L1276,55" stroke="#f0f0f0"/><circle cx="1277" cy="55" r="1.5" fill="none" stroke="#f0f0f0"/><circle cx="1282" cy="55" r="1.5" fill="none" stroke="#f0f0f0"/>
<rect x="1271" y="61" width="8" height="10" fill="#cfcfcf" stroke="#888" stroke-width="0.5"/><rect x="1274" y="64" width="8" height="10" fill="#d9d9d9" stroke="#888" stroke-width="0.5"/>
<path d="M1300.6,44.7 H1310 V53 H1326.2 V64 H1300.6 Z" stroke="none" stroke-width="1" fill="#d9d9d9"/>
<text class="S" x="1304" y="79.4" font-size="10.5" fill="#e8e8e8" textLength="19.0" lengthAdjust="spacingAndGlyphs">Base</text>
<path d="M1311.0,84.0 L1316.0,84.0 L1313.5,87.0 Z" fill="#ececec"/>
<rect x="0" y="115" width="1536" height="20" fill="#3a3a3a"/>
<rect x="0" y="135" width="1536" height="3" fill="#555"/>
<path d="M15,135 Q19,134 20,125 Q21,118 28,118 H105.5 Q111.5,118 112.5,125 Q113.5,134 117.5,135 Z" fill="url(#gtab)" stroke="#323232" stroke-width="0.8"/>
<text class="S" x="25.8" y="131" font-size="10.5" fill="#b8b8b8" textLength="19.0" lengthAdjust="spacingAndGlyphs">Start</text>
<path d="M115.4,135 Q119.4,134 120.4,125 Q121.4,118 128.4,118 H203 Q209,118 210,125 Q211,134 215,135 Z" fill="url(#gtab)" stroke="#323232" stroke-width="0.8"/>
<text class="S" x="124.2" y="131" font-size="10.5" fill="#b8b8b8" textLength="32.5" lengthAdjust="spacingAndGlyphs">mezzi_2</text>
<path d="M198.5,124 L203.5,129 M203.5,124 L198.5,129" stroke="#383838" stroke-width="1.1"/>
<path d="M212,135 Q216,134 217,125 Q218,118 225,118 H302 Q308,118 309,125 Q310,134 314,135 Z" fill="url(#gtab)" stroke="#323232" stroke-width="0.8"/>
<text class="S" x="222.7" y="131" font-size="10.5" fill="#b8b8b8" textLength="66.3" lengthAdjust="spacingAndGlyphs">bulldozer_3d_1*</text>
<path d="M297.0,124 L302.0,129 M302.0,124 L297.0,129" stroke="#383838" stroke-width="1.1"/>
<path d="M312.5,135 Q316.5,134 317.5,125 Q318.5,118 325.5,118 H409.8 Q415.8,118 416.8,125 Q417.8,134 421.8,135 Z" fill="url(#gtab)" stroke="#323232" stroke-width="0.8"/>
<text class="S" x="320.8" y="131" font-size="10.5" fill="#b8b8b8" textLength="75.2" lengthAdjust="spacingAndGlyphs">attrezzi_palestra_2</text>
<path d="M404.2,124 L409.2,129 M409.2,124 L404.2,129" stroke="#383838" stroke-width="1.1"/>
<path d="M419.8,135 Q423.8,134 424.8,125 Q425.8,118 432.8,118 H507.70000000000005 Q513.7,118 514.7,125 Q515.7,134 519.7,135 Z" fill="url(#gtab)" stroke="#323232" stroke-width="0.8"/>
<text class="S" x="428" y="131" font-size="10.5" fill="#b8b8b8" textLength="23.0" lengthAdjust="spacingAndGlyphs">Lama</text>
<path d="M502.5,124 L507.5,129 M507.5,124 L502.5,129" stroke="#383838" stroke-width="1.1"/>
<path d="M517,135 Q521,134 522,125 Q523,118 530,118 H606.7 Q612.7,118 613.7,125 Q614.7,134 618.7,135 Z" fill="url(#gtab)" stroke="#323232" stroke-width="0.8"/>
<text class="S" x="526" y="131" font-size="10.5" fill="#b8b8b8" textLength="34.4" lengthAdjust="spacingAndGlyphs">05r-klg1</text>
<path d="M601.5,124 L606.5,129 M606.5,124 L601.5,129" stroke="#383838" stroke-width="1.1"/>
<path d="M616.6,135 Q620.6,134 621.6,125 Q622.6,118 629.6,118 H704.8 Q710.8,118 711.8,125 Q712.8,134 716.8,135 Z" fill="url(#gtab)" stroke="#323232" stroke-width="0.8"/>
<text class="S" x="625" y="131" font-size="10.5" fill="#b8b8b8" textLength="44.8" lengthAdjust="spacingAndGlyphs">bevande_2</text>
<path d="M699.5,124 L704.5,129 M704.5,124 L699.5,129" stroke="#383838" stroke-width="1.1"/>
<path d="M714,135 Q718,134 719,125 Q720,118 727,118 H804.3 Q810.3,118 811.3,125 Q812.3,134 816.3,135 Z" fill="url(#gtab)" stroke="#323232" stroke-width="0.8"/>
<text class="S" x="723.7" y="131" font-size="10.5" fill="#b8b8b8" textLength="67.3" lengthAdjust="spacingAndGlyphs">airport_profile_1</text>
<path d="M799.5,124 L804.5,129 M804.5,124 L799.5,129" stroke="#383838" stroke-width="1.1"/>
<path d="M814.5,135 Q818.5,134 819.5,125 Q820.5,118 827.5,118 H904 Q910,118 911,125 Q912,134 916,135 Z" fill="url(#gtabA)" stroke="#323232" stroke-width="0.8"/>
<text class="S" x="823.8" y="131" font-size="10.5" fill="#f0f0f0" textLength="60.2" lengthAdjust="spacingAndGlyphs">Detail Gording</text>
<path d="M898.1,124 L903.1,129 M903.1,124 L898.1,129" stroke="#383838" stroke-width="1.1"/>
<path d="M917,135 Q920,134 921,127 Q922,121 927,121 H936 Q939,121 939,127 V135 Z" fill="url(#gtab)" stroke="#323232" stroke-width="0.8"/>
<path d="M928,123.5 V131.5 M924,127.5 H932" stroke="#dcdcdc" stroke-width="1.4"/>
<rect x="0" y="115" width="14" height="20" fill="#3a3a3a"/>
<text class="S" x="3" y="153" font-size="10.5" fill="#e0e0e0" textLength="99.0" lengthAdjust="spacingAndGlyphs">[−][Top][2D Wireframe]</text>
<rect x="1481.5" y="150" width="7" height="2" fill="#e8e8e8"/>
<g fill="none" stroke="#e8e8e8" stroke-width="1.2"><rect x="1497.5" y="147.5" width="5" height="5"/><path d="M1499.5,147.5 V145.5 H1505 V151 H1503"/></g>
<path d="M1514,146 L1520,152.5 M1520,146 L1514,152.5" stroke="#e8e8e8" stroke-width="1.6"/>
<rect x="1530" y="138" width="6" height="665" fill="#d6e3f1"/>
<rect x="1529" y="138" width="1" height="665" fill="#9aa6b2"/>
<circle cx="1464.4" cy="223.5" r="43.3" fill="none" stroke="#434850" stroke-width="10"/>
<rect x="1443.5" y="202.5" width="41" height="41" fill="#a8a8a8"/>
<rect x="1451" y="210.5" width="26" height="26" fill="#a0a0a0"/>
<text class="S" x="1464.5" y="228.5" font-size="10" fill="#5f6368" textLength="17.0" lengthAdjust="spacingAndGlyphs" text-anchor="middle" font-weight="bold">TOP</text>
<text class="S" x="1464" y="184.5" font-size="16" fill="#c4c4c4" textLength="10.5" lengthAdjust="spacingAndGlyphs" text-anchor="middle" font-weight="bold">N</text>
<text class="S" x="1464" y="274.8" font-size="16" fill="#c4c4c4" textLength="10.0" lengthAdjust="spacingAndGlyphs" text-anchor="middle" font-weight="bold">S</text>
<text class="S" x="1419" y="230" font-size="16" fill="#c4c4c4" textLength="15.0" lengthAdjust="spacingAndGlyphs" text-anchor="middle" font-weight="bold">W</text>
<text class="S" x="1509" y="230" font-size="16" fill="#c4c4c4" textLength="10.5" lengthAdjust="spacingAndGlyphs" text-anchor="middle" font-weight="bold">E</text>
<rect x="1445" y="293.5" width="38" height="13" rx="3" fill="#9c9c9c" stroke="#6f6f6f" stroke-width="0.6"/>
<text class="S" x="1448" y="304" font-size="9.5" fill="#7a7a7a" textLength="21.0" lengthAdjust="spacingAndGlyphs">WCS</text>
<path d="M1473,298.5 L1476,302 L1479,298.5" fill="none" stroke="#888" stroke-width="0.8"/>
<rect x="1502" y="327.5" width="25" height="169" rx="2" fill="#50555b" stroke="#61666c" stroke-width="1"/>
<g fill="none" stroke="#666b71" stroke-width="1.5"><path d="M1519,346 A6.5,6.5 0 1 0 1519.5,355"/><circle cx="1513" cy="350.7" r="3.2"/><path d="M1508,393 Q1506,386 1509,383 V380 Q1509,378 1510.5,379 V385 M1510.5,378.5 V376.5 Q1511.5,375 1512.5,376.5 V384 M1512.5,376 Q1513.5,374.5 1514.5,376 V384 M1514.5,377 Q1515.5,375.5 1516.5,377 V385 M1516.5,383 Q1518,380 1519.5,381.5 Q1519,387 1516,393 Z"/><path d="M1506,399 L1520,413 M1520,399 L1506,413"/><circle cx="1517" cy="411" r="3.2"/><path d="M1519.5,413.5 L1522,416"/><path d="M1513.5,430 V446 M1505,440 Q1513,446 1522,439"/><path d="M1511,433 L1513.5,429.5 L1516,433"/><rect x="1505.5" y="463.5" width="4" height="4"/><rect x="1511.5" y="463.5" width="4" height="4"/><rect x="1517.5" y="463.5" width="4" height="4"/><rect x="1506.5" y="470.5" width="14" height="10.5"/><path d="M1511,473 L1516,476 L1511,479 Z" fill="#666b71"/></g>
<path d="M1505,372.6 H1524 M1505,459 H1524" stroke="#666b71" stroke-dasharray="1,1"/>
<path d="M1512.0,366.0 L1515.0,366.0 L1513.5,368.0 Z" fill="#666b71"/>
<path d="M1512.0,422.0 L1515.0,422.0 L1513.5,424.0 Z" fill="#666b71"/>
<path d="M1512.0,452.6 L1515.0,452.6 L1513.5,454.6 Z" fill="#666b71"/>
<circle cx="1522.8" cy="331" r="1.6" fill="none" stroke="#666b71"/><circle cx="1522.8" cy="492" r="1.6" fill="none" stroke="#666b71"/>
<g stroke="#e6e6e6" stroke-width="1" fill="none"><path d="M16.5,746 V786.5 H57"/><rect x="13" y="782.5" width="7.5" height="7"/></g>
<path d="M60,775 L70.5,785 M70.5,775 L60,785" stroke="#e6e6e6" stroke-width="1.1"/>
<path d="M17.3,732.2 L22.6,737.5 L28,732.2 M22.6,737.5 V743" stroke="#e6e6e6" stroke-width="1.1" fill="none"/>
<rect x="374.7" y="735.5" width="631" height="11" fill="#55595e" fill-opacity="0.93" rx="1.5"/>
<text class="M" x="376" y="744.5" font-size="9.33" fill="#d6d6d6" textLength="627.0" lengthAdjust="spacingAndGlyphs">Autodesk DWG.  This file is a TrustedDWG last saved by an Autodesk application or Autodesk licensed application.</text>
<rect x="374.7" y="751" width="48" height="12" fill="#55595e" fill-opacity="0.93" rx="1.5"/>
<text class="M" x="376" y="760.5" font-size="9.33" fill="#d6d6d6" textLength="44.5" lengthAdjust="spacingAndGlyphs">Command:</text>
<rect x="374.7" y="767" width="48" height="12" fill="#55595e" fill-opacity="0.93" rx="1.5"/>
<text class="M" x="376" y="776.5" font-size="9.33" fill="#d6d6d6" textLength="44.5" lengthAdjust="spacingAndGlyphs">Command:</text>
<rect x="326.8" y="782.3" width="43" height="19.5" fill="#474747" fill-opacity="0.78"/>
<rect x="326.8" y="782.3" width="43" height="0.8" fill="#6a6a6a"/>
<g fill="#8a8a8a"><rect x="331" y="786" width="1" height="1"/><rect x="331" y="788" width="1" height="1"/><rect x="331" y="790" width="1" height="1"/><rect x="331" y="792" width="1" height="1"/><rect x="331" y="794" width="1" height="1"/><rect x="331" y="796" width="1" height="1"/><rect x="331" y="798" width="1" height="1"/><rect x="333" y="786" width="1" height="1"/><rect x="333" y="788" width="1" height="1"/><rect x="333" y="790" width="1" height="1"/><rect x="333" y="792" width="1" height="1"/><rect x="333" y="794" width="1" height="1"/><rect x="333" y="796" width="1" height="1"/><rect x="333" y="798" width="1" height="1"/></g>
<path d="M339,788.5 L345,794.5 M345,788.5 L339,794.5" stroke="#e8e8e8" stroke-width="1.3"/>
<path d="M357,791 L363.5,797.5" stroke="#e0e0e0" stroke-width="2.2" stroke-linecap="round"/><path d="M353.5,786.5 A3.6,3.6 0 1 0 358.5,791.5" fill="none" stroke="#e0e0e0" stroke-width="1.8"/><path d="M354.5,785.5 L352,788" stroke="#e0e0e0" stroke-width="1.2"/>
<rect x="369.8" y="781.5" width="840.5" height="20" fill="#b7b7b7" style="mix-blend-mode:screen"/>
<rect x="374.5" y="786.5" width="11" height="10" fill="#cfcfcf" stroke="#8a8a8a" stroke-width="0.8"/><path d="M376.5,789 L379,791 L376.5,793 M379.5,794.5 H383" stroke="#555" stroke-width="0.8" fill="none"/>
<path d="M389.0,789.75 L393.0,789.75 L391,792.25 Z" fill="#6a6a6a"/>
<text class="M" x="399" y="795" font-size="9.33" fill="#8c8c8c" textLength="77.0" lengthAdjust="spacingAndGlyphs" font-style="italic">Type a command</text>
<path d="M1201.5,793 L1206.5,793 L1204,789.5 Z" fill="#2a2a2a"/>
<rect x="0" y="802.5" width="1536" height="19.5" fill="#3d3d3d"/>
<rect x="0" y="802.5" width="1536" height="1" fill="#5a5a5a"/>
<defs><linearGradient id="gmod" x1="0" y1="0" x2="0" y2="1"><stop offset="0" stop-color="#909090"/><stop offset="1" stop-color="#6c6c6c"/></linearGradient></defs>
<path d="M6,803 Q10,803 11,808 L12.5,815.5 Q13.5,817 16,817 H51 Q53.5,817 54,815.5 L56,807 Q57,803 59,803 Z" fill="url(#gmod)"/>
<text class="S" x="19" y="813" font-size="10.5" fill="#ffffff" textLength="27.2" lengthAdjust="spacingAndGlyphs" font-weight="bold">Model</text>
<path d="M57,803 Q59,804 59.5,808 L60.5,815.5 Q61.5,818 64,818 H103 Q105.5,818 106,815.5 L108,807 Q109,803 112,803 Z" fill="#595959"/>
<text class="S" x="65" y="813" font-size="10.5" fill="#cfcfcf" textLength="32.0" lengthAdjust="spacingAndGlyphs">Layout1</text>
<path d="M115,803 H129 L126.5,815 Q126,818 123,818 H114 Q111,818 112,815 Z" fill="#575757"/>
<path d="M119.5,806.5 V814 M115.8,810.3 H123.2" stroke="#e0e0e0" stroke-width="1.4"/>
<rect x="1086.7" y="803.8" width="37.899999999999864" height="18.5" fill="#505050" stroke="#646464" stroke-width="0.9"/>
<rect x="1126.7" y="803.8" width="50.59999999999991" height="18.5" fill="#505050" stroke="#646464" stroke-width="0.9"/>
<rect x="1179.5" y="803.8" width="80.90000000000009" height="18.5" fill="#505050" stroke="#646464" stroke-width="0.9"/>
<rect x="1262" y="803.8" width="50.299999999999955" height="18.5" fill="#505050" stroke="#646464" stroke-width="0.9"/>
<rect x="1315.4" y="803.8" width="83.59999999999991" height="18.5" fill="#505050" stroke="#646464" stroke-width="0.9"/>
<rect x="1401.5" y="803.8" width="31.09999999999991" height="18.5" fill="#505050" stroke="#646464" stroke-width="0.9"/>
<rect x="1434.6" y="803.8" width="18.40000000000009" height="18.5" fill="#505050" stroke="#646464" stroke-width="0.9"/>
<rect x="1455.4" y="803.8" width="19.199999999999818" height="18.5" fill="#505050" stroke="#646464" stroke-width="0.9"/>
<rect x="1476.6" y="803.8" width="18.0" height="18.5" fill="#505050" stroke="#646464" stroke-width="0.9"/>
<rect x="1497" y="803.8" width="39" height="18.5" fill="#505050" stroke="#646464" stroke-width="0.9"/>
<text class="S" x="1089" y="818" font-size="10.5" fill="#e8e8e8" textLength="33.0" lengthAdjust="spacingAndGlyphs">MODEL</text>
<path d="M1131,806 V818 M1135,806 V818 M1139,806 V818 M1128,809 H1142 M1128,813 H1142" stroke="#e0e0e0" stroke-width="1"/>
<g fill="#e0e0e0"><rect x="1150.5" y="808.0" width="1.6" height="1.6"/><rect x="1150.5" y="812.5" width="1.6" height="1.6"/><rect x="1150.5" y="817.0" width="1.6" height="1.6"/><rect x="1155.0" y="808.0" width="1.6" height="1.6"/><rect x="1155.0" y="812.5" width="1.6" height="1.6"/><rect x="1155.0" y="817.0" width="1.6" height="1.6"/><rect x="1159.5" y="808.0" width="1.6" height="1.6"/><rect x="1159.5" y="812.5" width="1.6" height="1.6"/><rect x="1159.5" y="817.0" width="1.6" height="1.6"/></g>
<path d="M1168.5,811.5 L1173.5,811.5 L1171,814.5 Z" fill="#e8e8e8"/>
<path d="M1183.5,806 V818.5 H1193 M1185,816 H1187 V818" stroke="#e0e0e0" fill="none"/>
<circle cx="1208" cy="813" r="5" fill="none" stroke="#e0e0e0"/><path d="M1203,813 H1213 L1206,819 M1208,808 L1213,805" stroke="#e0e0e0" fill="none"/>
<path d="M1221.5,811.5 L1226.5,811.5 L1224,814.5 Z" fill="#e8e8e8"/>
<path d="M1234,806 L1243,820" stroke="#e0452a" stroke-width="1.2"/><path d="M1240,805 L1237,820" stroke="#e0e0e0"/><circle cx="1239" cy="813" r="1.5" fill="#e0e0e0"/>
<path d="M1252.5,811.5 L1257.5,811.5 L1255,814.5 Z" fill="#e8e8e8"/>
<rect x="1263" y="804" width="17.3" height="18" fill="#5f86b3"/>
<path d="M1266,818 L1278,808 M1266,818 H1278" stroke="#f0f0f0" stroke-width="1.2"/>
<rect x="1282.8" y="804" width="17" height="18" fill="#5f86b3"/>
<rect x="1287.5" y="808.5" width="10" height="10" fill="none" stroke="#f0f0f0" stroke-dasharray="2,1"/><rect x="1285" y="806" width="4" height="4" fill="none" stroke="#f0f0f0"/>
<path d="M1304.5,811.5 L1309.5,811.5 L1307,814.5 Z" fill="#e8e8e8"/>
<rect x="1316" y="804" width="17.5" height="18" fill="#5f86b3"/>
<path d="M1320,820 L1326,808 L1332,820 M1322,816 L1326,811 L1330,816" stroke="#f0f0f0" stroke-width="1.5" fill="none"/><circle cx="1331" cy="808" r="2" fill="none" stroke="#f0f0f0"/>
<path d="M1338,820 L1344,808 L1350,820 M1340,816 L1344,811 L1348,816" stroke="#e0e0e0" stroke-width="1.5" fill="none"/><path d="M1349,806 L1347,810 H1350 L1348,813" stroke="#e0e0e0" fill="none"/>
<path d="M1357,820 L1363,808 L1369,820 M1359,816 L1363,811 L1367,816" stroke="#e0e0e0" stroke-width="1.5" fill="none"/>
<text class="S" x="1376" y="818" font-size="10.5" fill="#e8e8e8" textLength="13.0" lengthAdjust="spacingAndGlyphs">1:1</text>
<path d="M1390.5,811.5 L1395.5,811.5 L1393,814.5 Z" fill="#e8e8e8"/>
<g fill="#e0e0e0"><rect x="1409.2" y="805.8" width="2.6" height="3" transform="rotate(0 1410.5 813)"/><rect x="1409.2" y="805.8" width="2.6" height="3" transform="rotate(45 1410.5 813)"/><rect x="1409.2" y="805.8" width="2.6" height="3" transform="rotate(90 1410.5 813)"/><rect x="1409.2" y="805.8" width="2.6" height="3" transform="rotate(135 1410.5 813)"/><rect x="1409.2" y="805.8" width="2.6" height="3" transform="rotate(180 1410.5 813)"/><rect x="1409.2" y="805.8" width="2.6" height="3" transform="rotate(225 1410.5 813)"/><rect x="1409.2" y="805.8" width="2.6" height="3" transform="rotate(270 1410.5 813)"/><rect x="1409.2" y="805.8" width="2.6" height="3" transform="rotate(315 1410.5 813)"/><circle cx="1410.5" cy="813" r="4.6"/></g><circle cx="1410.5" cy="813" r="1.8" fill="#4a4a4a"/>
<path d="M1423.5,811.5 L1428.5,811.5 L1426,814.5 Z" fill="#e8e8e8"/>
<path d="M1442,806 V820 M1435,813 H1449" stroke="#e0e0e0" stroke-width="1.5"/>
<g fill="none" stroke="#e0e0e0"><rect x="1456" y="807" width="5" height="5"/><circle cx="1467" cy="810" r="2.5"/><path d="M1461,820 L1464,814.5 L1467,820 Z"/></g>
<rect x="1480" y="806" width="11" height="12" fill="#6fb6ee"/><path d="M1480,815 H1490 V819 H1480 Z" fill="#f7c75d"/><path d="M1486,818 L1488,820 L1493,815" stroke="#46c24a" stroke-width="1.4" fill="none"/>
<rect x="1500.5" y="807.5" width="12.5" height="10" fill="none" stroke="#e0e0e0"/><path d="M1506,810 L1510,810 L1510,813 M1510,810 L1507,813 M1503,815.5 L1506,812.5" stroke="#e0e0e0" stroke-width="0.9" fill="none"/>
<path d="M1519,808 H1532 M1519,813 H1532 M1519,818 H1532" stroke="#e0e0e0" stroke-width="1.6"/>
</svg></body></html>
